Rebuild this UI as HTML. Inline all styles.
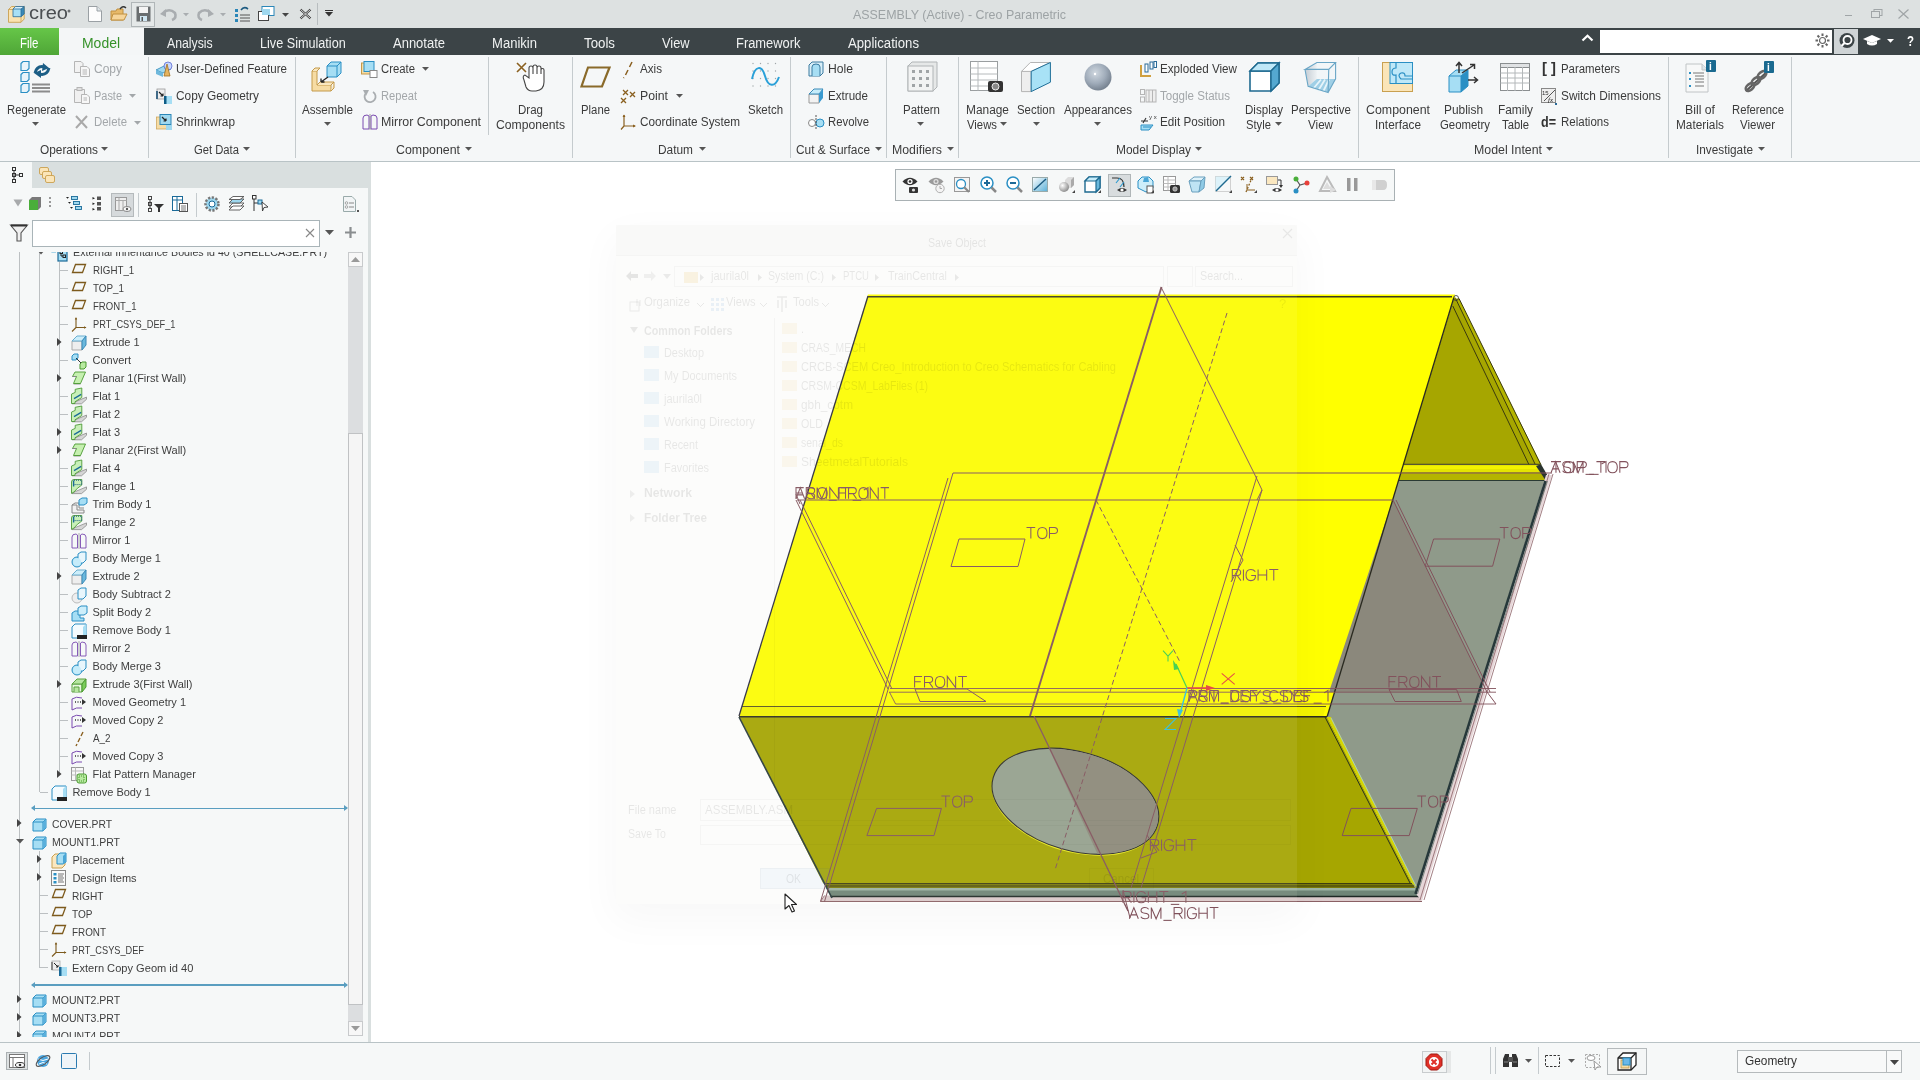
<!DOCTYPE html>
<html><head><meta charset="utf-8"><style>
html,body{margin:0;padding:0;width:1920px;height:1080px;overflow:hidden;position:relative;background:#fff;font-family:"Liberation Sans",sans-serif}
.t{position:absolute;white-space:nowrap;line-height:1;font-family:"Liberation Sans",sans-serif;transform-origin:0 0}
svg{overflow:visible}
</style></head><body><div style="position:absolute;left:0;top:0;width:1920px;height:1080px;overflow:hidden;will-change:transform">
<div style="position:absolute;left:0px;top:0px;width:1920px;height:28px;background:#dde1e1"></div>
<div style="position:absolute;left:0px;top:28px;width:1920px;height:27px;background:#3c4447"></div>
<div style="position:absolute;left:0px;top:28px;width:59px;height:27px;background:linear-gradient(180deg,#66c648,#4fa637)"></div>
<div style="position:absolute;left:59px;top:28px;width:85px;height:27px;background:#f4f6f7"></div>
<div style="position:absolute;left:0px;top:55px;width:1920px;height:106px;background:#f5f7f8"></div>
<div style="position:absolute;left:0px;top:161px;width:1920px;height:1px;background:#b9c3c6"></div>
<div style="position:absolute;left:0px;top:162px;width:371px;height:880px;background:#f6f8f8"></div>
<div style="position:absolute;left:32px;top:162px;width:336px;height:26px;background:#d9dfdf"></div>
<div style="position:absolute;left:368px;top:162px;width:3px;height:880px;background:#d9dfdf"></div>
<div style="position:absolute;left:371px;top:162px;width:1549px;height:880px;background:#ffffff"></div>
<div style="position:absolute;left:0px;top:1042px;width:1920px;height:1px;background:#b9c3c6"></div>
<div style="position:absolute;left:0px;top:1043px;width:1920px;height:37px;background:#f6f8f8"></div>
<svg style="position:absolute;left:8px;top:6px;" width="17" height="17" viewBox="0 0 17 17"><path d="M0.5 3.5L3.5 0.5H16.2V13L13 16.3H0.5Z" fill="#fbe3b0" stroke="#c9a050" stroke-width="0.9"></path><path d="M0.5 3.5H13V16.3M13 3.5L16.2 0.5" fill="none" stroke="#c9a050" stroke-width="0.8"></path><path d="M5 3H13V10.7H5Z" fill="#a8e0f6"></path><path d="M5 3L7.5 0.5H16.2L13 3Z" fill="#d4f0fc"></path><path d="M13 3L16.2 0.5V8L13 10.7Z" fill="#3a8ab8"></path><path d="M5 3H13V10.7H5ZM5 3L7.5 0.5H16.2V8L13 10.7M13 3L16.2 0.5" fill="none" stroke="#2a6a98" stroke-width="0.8"></path></svg>
<div class="t" style="left: 28.5px; top: 3.76px; font-size: 18px; color: rgb(75, 79, 82); transform: scaleX(1.1138);">creo</div>
<svg style="position:absolute;left:67px;top:9px;" width="4" height="4" viewBox="0 0 4 4"><circle cx="2" cy="2" r="1.5" fill="#6b6f72"></circle></svg>
<svg style="position:absolute;left:88px;top:6px;" width="14" height="16" viewBox="0 0 14 16"><path d="M0.5 0.5H9L13.5 5V15.5H0.5Z" fill="#fdfdfd" stroke="#9aa0a4"></path><path d="M9 0.5V5H13.5" fill="#dfe6ea" stroke="#9aa0a4"></path></svg>
<svg style="position:absolute;left:110px;top:5px;" width="18" height="17" viewBox="0 0 18 17"><path d="M1 6H6L7 4H13V15H1Z" fill="#e7b969" stroke="#c09040"></path><path d="M3 9H17L14 15H1Z" fill="#f6d59a" stroke="#c09040"></path><path d="M10 4 Q13 0 16 3" stroke="#333" fill="none" stroke-width="1.4"></path></svg>
<div style="position:absolute;left:131px;top:2px;width:24px;height:25px;background:#e4e8e8;border:1px solid #b0b6b8;box-sizing:border-box"></div>
<svg style="position:absolute;left:136px;top:6px;" width="15" height="16" viewBox="0 0 15 16"><path d="M0.5 0.5H14.5V15.5H0.5Z" fill="#6a6e70"></path><rect x="3" y="1" width="9" height="6" fill="#f4f4f4"></rect><rect x="4" y="10" width="7" height="5" fill="#cfe6f2"></rect><rect x="5.5" y="11" width="1.5" height="4" fill="#555"></rect></svg>
<svg style="position:absolute;left:160px;top:8px;" width="17" height="13" viewBox="0 0 17 13"><path d="M4 4 Q10 0 15 5 Q17 10 12 12" stroke="#a9adb0" stroke-width="2.6" fill="none"></path><path d="M0 6L6 1V9Z" fill="#a9adb0"></path></svg>
<svg style="position:absolute;left:183px;top:13px;" width="6" height="4.300000000000001" viewBox="0 0 6 4.300000000000001"><path d="M0 0H6L3.0 3.3000000000000003Z" fill="#a9adb0"></path></svg>
<svg style="position:absolute;left:197px;top:8px;" width="17" height="13" viewBox="0 0 17 13"><path d="M13 4 Q7 0 2 5 Q0 10 5 12" stroke="#a9adb0" stroke-width="2.6" fill="none"></path><path d="M17 6L11 1V9Z" fill="#a9adb0"></path></svg>
<svg style="position:absolute;left:220px;top:13px;" width="6" height="4.300000000000001" viewBox="0 0 6 4.300000000000001"><path d="M0 0H6L3.0 3.3000000000000003Z" fill="#a9adb0"></path></svg>
<svg style="position:absolute;left:235px;top:6px;" width="16" height="16" viewBox="0 0 16 16"><rect x="0" y="3" width="3" height="3" fill="#2a86b8"></rect><rect x="0" y="8" width="3" height="3" fill="#2a86b8"></rect><rect x="0" y="13" width="3" height="3" fill="#2a86b8"></rect><path d="M5 9H15M5 12H15M5 15H15" stroke="#555" stroke-width="1"></path><path d="M6 4 Q9 0 13 3" stroke="#1c5a80" stroke-width="1.6" fill="none"></path></svg>
<svg style="position:absolute;left:258px;top:6px;" width="17" height="16" viewBox="0 0 17 16"><rect x="4" y="0.5" width="12" height="9" fill="#fff" stroke="#2a86b8"></rect><rect x="0.5" y="5.5" width="10" height="9" fill="#fff" stroke="#444"></rect><rect x="4" y="3" width="8" height="6" fill="#9fd8ef"></rect></svg>
<svg style="position:absolute;left:282px;top:13px;" width="7" height="4.8500000000000005" viewBox="0 0 7 4.8500000000000005"><path d="M0 0H7L3.5 3.8500000000000005Z" fill="#444"></path></svg>
<svg style="position:absolute;left:299px;top:8px;" width="13" height="12" viewBox="0 0 13 12"><path d="M1.5 1.5L11.5 10.5M11.5 1.5L1.5 10.5" stroke="#333" stroke-width="2.2"></path><path d="M1.5 1.5L11.5 10.5M11.5 1.5L1.5 10.5" stroke="#fff" stroke-width="0.8"></path></svg>
<div style="position:absolute;left:317px;top:3px;width:1px;height:22px;background:#b8bdbf"></div>
<svg style="position:absolute;left:325px;top:12px;" width="8" height="5.4" viewBox="0 0 8 5.4"><path d="M0 0H8L4.0 4.4Z" fill="#333"></path></svg>
<div style="position:absolute;left:325px;top:10px;width:8px;height:1px;background:#333"></div>
<div class="t" style="left: 853px; top: 8px; font-size: 13px; color: rgb(157, 163, 165); transform: scaleX(0.9562);">ASSEMBLY (Active) - Creo Parametric</div>
<div style="position:absolute;left:1845px;top:15px;width:7px;height:1px;background:#a0a5a7"></div>
<svg style="position:absolute;left:1871px;top:9px;" width="12" height="9" viewBox="0 0 12 9"><rect x="3" y="0.5" width="8" height="6" fill="none" stroke="#a0a5a7"></rect><rect x="0.5" y="2.5" width="8" height="6" fill="#dde1e1" stroke="#a0a5a7"></rect></svg>
<svg style="position:absolute;left:1898px;top:9px;" width="11" height="10" viewBox="0 0 11 10"><path d="M0.5 0.5L10.5 9.5M10.5 0.5L0.5 9.5" stroke="#a0a5a7" stroke-width="1.2"></path></svg>
<div class="t" style="left: 20px; top: 35.65px; font-size: 14px; color: rgb(255, 255, 255); transform: scaleX(0.8199);">File</div>
<div class="t" style="left: 82px; top: 35.65px; font-size: 14px; color: rgb(54, 146, 42); transform: scaleX(0.9963);">Model</div>
<div class="t" style="left: 167px; top: 35.65px; font-size: 14px; color: rgb(240, 242, 242); transform: scaleX(0.8774);">Analysis</div>
<div class="t" style="left: 260px; top: 35.65px; font-size: 14px; color: rgb(240, 242, 242); transform: scaleX(0.9032);">Live Simulation</div>
<div class="t" style="left: 393px; top: 35.65px; font-size: 14px; color: rgb(240, 242, 242); transform: scaleX(0.9275);">Annotate</div>
<div class="t" style="left: 492px; top: 35.65px; font-size: 14px; color: rgb(240, 242, 242); transform: scaleX(0.9326);">Manikin</div>
<div class="t" style="left: 584px; top: 35.65px; font-size: 14px; color: rgb(240, 242, 242); transform: scaleX(0.9484);">Tools</div>
<div class="t" style="left: 662px; top: 35.65px; font-size: 14px; color: rgb(240, 242, 242); transform: scaleX(0.9138);">View</div>
<div class="t" style="left: 736px; top: 35.65px; font-size: 14px; color: rgb(240, 242, 242); transform: scaleX(0.9212);">Framework</div>
<div class="t" style="left: 848px; top: 35.65px; font-size: 14px; color: rgb(240, 242, 242); transform: scaleX(0.9404);">Applications</div>
<svg style="position:absolute;left:1582px;top:35px;" width="11" height="6" viewBox="0 0 11 6"><path d="M0.5 5.5L5.5 0.8L10.5 5.5" stroke="#fff" stroke-width="2.2" fill="none"></path></svg>
<div style="position:absolute;left:1600px;top:30px;width:232px;height:23px;background:#ffffff"></div>
<svg style="position:absolute;left:1814px;top:32px;" width="17" height="17" viewBox="0 0 17 17"><circle cx="8.5" cy="8.5" r="3" fill="none" stroke="#666" stroke-width="1.2"></circle><path d="M8.5 1.5V4M8.5 13V15.5M1.5 8.5H4M13 8.5H15.5M3.5 3.5L5.3 5.3M11.7 11.7L13.5 13.5M13.5 3.5L11.7 5.3M5.3 11.7L3.5 13.5" stroke="#666" stroke-width="2"></path></svg>
<div style="position:absolute;left:1834px;top:29px;width:24px;height:25px;background:#cfd4d6"></div>
<svg style="position:absolute;left:1837px;top:32px;" width="19" height="19" viewBox="0 0 19 19"><circle cx="10" cy="8.5" r="7.5" fill="#3c4447"></circle><circle cx="10.5" cy="8" r="4" fill="none" stroke="#fff" stroke-width="1.8"></circle><path d="M7.5 11L4.5 14" stroke="#fff" stroke-width="2.2"></path></svg>
<svg style="position:absolute;left:1863px;top:35px;" width="18" height="11" viewBox="0 0 18 11"><path d="M0 4L9 0L18 4L9 8Z" fill="#fff"></path><path d="M4 6V9Q9 12 14 9V6L9 8Z" fill="#fff"></path></svg>
<svg style="position:absolute;left:1887px;top:39px;" width="7" height="4.8500000000000005" viewBox="0 0 7 4.8500000000000005"><path d="M0 0H7L3.5 3.8500000000000005Z" fill="#fff"></path></svg>
<div class="t" style="left: 1907px; top: 34.15px; font-size: 14px; color: rgb(255, 255, 255); font-weight: bold; transform: scaleX(0.8175);">?</div>
<svg style="position:absolute;left:20px;top:60px;" width="32" height="32" viewBox="0 0 32 32">
      <g fill="#e8f4fa" stroke="#2a8fc4" stroke-width="1.2">
      <path d="M1 3.5L3 1.5H9V8.5L7 10.5H1Z"></path><path d="M1 14.5L3 12.5H9V19.5L7 21.5H1Z"></path><path d="M1 25.5L3 23.5H9V30.5L7 32.5H1Z"></path></g>
      <path d="M12 28H30M12 24.5H30M12 31.5H30" stroke="#8c8c8c" stroke-width="1.8"></path>
      <path d="M15 13 Q17 5 25 7" stroke="#1c5e86" stroke-width="3" fill="none"></path><path d="M23 3L29 8L22 11Z" fill="#1c5e86"></path>
      <path d="M29 8 Q27 16 19 14" stroke="#1c5e86" stroke-width="3" fill="none"></path><path d="M21 18L14 13L21 10Z" fill="#1c5e86"></path></svg>
<div class="t" style="left: 7px; top: 104.22px; font-size: 12.5px; color: rgb(59, 59, 59); transform: scaleX(0.9031);">Regenerate</div>
<svg style="position:absolute;left:32px;top:122px;" width="7" height="4.8500000000000005" viewBox="0 0 7 4.8500000000000005"><path d="M0 0H7L3.5 3.8500000000000005Z" fill="#555"></path></svg>
<svg style="position:absolute;left:74px;top:61px;" width="16" height="16" viewBox="0 0 16 16"><path d="M0.5 0.5H7L9 2.5V11.5H0.5Z" fill="#f2f2f2" stroke="#b5b5b5"></path><path d="M6.5 5.5H13L15.5 8V15.5H6.5Z" fill="#f7f7f7" stroke="#b5b5b5"></path><path d="M8.5 9H13M8.5 11H13M8.5 13H13" stroke="#b5b5b5"></path></svg>
<div class="t" style="left: 94px; top: 62.62px; font-size: 12.5px; color: rgb(163, 167, 170); transform: scaleX(0.9593);">Copy</div>
<svg style="position:absolute;left:74px;top:87px;" width="16" height="17" viewBox="0 0 16 17"><path d="M0.5 2.5H10.5V15.5H0.5Z" fill="#f0f0f0" stroke="#b5b5b5"></path><rect x="3" y="0.5" width="5" height="3" fill="#e0e0e0" stroke="#b5b5b5"></rect><path d="M7.5 7.5H13L15.5 10V16.5H7.5Z" fill="#f7f7f7" stroke="#b5b5b5"></path><path d="M9.5 11H13M9.5 13H13" stroke="#b5b5b5"></path></svg>
<div class="t" style="left: 94px; top: 90.22px; font-size: 12.5px; color: rgb(163, 167, 170); transform: scaleX(0.8759);">Paste</div>
<svg style="position:absolute;left:129px;top:94px;" width="7" height="4.8500000000000005" viewBox="0 0 7 4.8500000000000005"><path d="M0 0H7L3.5 3.8500000000000005Z" fill="#a3a7aa"></path></svg>
<svg style="position:absolute;left:75px;top:115px;" width="13" height="14" viewBox="0 0 13 14"><path d="M1 1L12 13M12 1L1 13" stroke="#a9a9a9" stroke-width="2"></path></svg>
<div class="t" style="left: 94px; top: 116.42px; font-size: 12.5px; color: rgb(163, 167, 170); transform: scaleX(0.9131);">Delete</div>
<svg style="position:absolute;left:134px;top:120.5px;" width="7" height="4.8500000000000005" viewBox="0 0 7 4.8500000000000005"><path d="M0 0H7L3.5 3.8500000000000005Z" fill="#a3a7aa"></path></svg>
<div class="t" style="left: 40px; top: 144.02px; font-size: 12.5px; color: rgb(59, 59, 59); transform: scaleX(0.9484);">Operations</div>
<svg style="position:absolute;left:101px;top:147px;" width="7" height="4.8500000000000005" viewBox="0 0 7 4.8500000000000005"><path d="M0 0H7L3.5 3.8500000000000005Z" fill="#555"></path></svg>
<div style="position:absolute;left:148px;top:57px;width:1px;height:101px;background:#c5cbce"></div>
<svg style="position:absolute;left:155px;top:61px;" width="18" height="17" viewBox="0 0 18 17"><path d="M1 9L9 5L16 8L8 12Z" fill="#9fd8ef" stroke="#2a86b8" stroke-width="0.8"></path><path d="M1 9V13L8 16V12Z" fill="#6fb8dc"></path><circle cx="13" cy="5" r="4" fill="#c8d8ff" stroke="#5a6ad0" stroke-width="0.8"></circle><path d="M9 15 L12 3 L15 15Z" fill="#e6b460" stroke="#a07020" stroke-width="0.8"></path></svg>
<div class="t" style="left: 176px; top: 62.62px; font-size: 12.5px; color: rgb(59, 59, 59); transform: scaleX(0.9234);">User-Defined Feature</div>
<svg style="position:absolute;left:156px;top:88px;" width="16" height="16" viewBox="0 0 16 16"><rect x="1" y="1" width="8" height="10" fill="#eee" stroke="#999" stroke-width="0.8"></rect><rect x="0" y="3" width="2" height="8" fill="#406a88"></rect><path d="M3 4L7 8M7 8V5.5M7 8H4.5" stroke="#222" stroke-width="1.1"></path><rect x="8" y="8" width="8" height="8" fill="#a6def4"></rect><rect x="8" y="8" width="2.5" height="8" fill="#0e5c86"></rect></svg>
<div class="t" style="left: 176px; top: 90.22px; font-size: 12.5px; color: rgb(59, 59, 59); transform: scaleX(0.9482);">Copy Geometry</div>
<svg style="position:absolute;left:156px;top:114px;" width="16" height="16" viewBox="0 0 16 16"><rect x="0.5" y="3" width="10" height="12" fill="#f6dca4" stroke="#d0a860" stroke-width="0.8"></rect><rect x="4" y="0.5" width="11" height="10" fill="#9fd8ef" stroke="#2a86b8"></rect><path d="M6 3L10 7M10 7V4.5M10 7H7.5" stroke="#222" stroke-width="1.2"></path><rect x="10" y="11" width="6" height="5" fill="#9fd8ef"></rect></svg>
<div class="t" style="left: 176px; top: 116.42px; font-size: 12.5px; color: rgb(59, 59, 59); transform: scaleX(0.9435);">Shrinkwrap</div>
<div class="t" style="left: 194px; top: 144.02px; font-size: 12.5px; color: rgb(59, 59, 59); transform: scaleX(0.8994);">Get Data</div>
<svg style="position:absolute;left:243px;top:147px;" width="7" height="4.8500000000000005" viewBox="0 0 7 4.8500000000000005"><path d="M0 0H7L3.5 3.8500000000000005Z" fill="#555"></path></svg>
<div style="position:absolute;left:295px;top:57px;width:1px;height:101px;background:#c5cbce"></div>
<svg style="position:absolute;left:310px;top:61px;" width="33" height="32" viewBox="0 0 33 32"><path d="M2 10H7V24H21V30H2Z" fill="#f6dca4" stroke="#c49a4a"></path><path d="M2 10L5 7H10L7 10M7 24L10 21H24L21 24M21 30L24 27V21" fill="#f9e7c0" stroke="#c49a4a"></path><path d="M17 5L21 1H31V12L27 16H17Z" fill="#a6def4" stroke="#2a8fc4"></path><path d="M17 5H27V16M27 5L31 1" fill="none" stroke="#2a8fc4"></path><path d="M18 16L11 21M11 21V17.5M11 21H14.5" stroke="#222" stroke-width="1.3"></path></svg>
<div class="t" style="left: 302px; top: 104.22px; font-size: 12.5px; color: rgb(59, 59, 59); transform: scaleX(0.9291);">Assemble</div>
<svg style="position:absolute;left:324px;top:122px;" width="7" height="4.8500000000000005" viewBox="0 0 7 4.8500000000000005"><path d="M0 0H7L3.5 3.8500000000000005Z" fill="#555"></path></svg>
<svg style="position:absolute;left:361px;top:61px;" width="17" height="17" viewBox="0 0 17 17"><rect x="0.5" y="2" width="10" height="11" fill="#f6dca4" stroke="#c49a4a"></rect><rect x="3" y="0.5" width="10" height="10" fill="#a6def4" stroke="#2a8fc4"></rect><rect x="9" y="9.5" width="7" height="7" fill="#fff" stroke="#888"></rect></svg>
<div class="t" style="left: 381px; top: 62.62px; font-size: 12.5px; color: rgb(59, 59, 59); transform: scaleX(0.9059);">Create</div>
<svg style="position:absolute;left:422px;top:66.5px;" width="7" height="4.8500000000000005" viewBox="0 0 7 4.8500000000000005"><path d="M0 0H7L3.5 3.8500000000000005Z" fill="#555"></path></svg>
<svg style="position:absolute;left:363px;top:89px;" width="14" height="14" viewBox="0 0 14 14"><path d="M10 3 A5.5 5.5 0 1 1 3 4" fill="none" stroke="#a9adb0" stroke-width="1.8"></path><path d="M0 1L6 1L3 7Z" fill="#a9adb0"></path></svg>
<div class="t" style="left: 381px; top: 90.22px; font-size: 12.5px; color: rgb(163, 167, 170); transform: scaleX(0.893);">Repeat</div>
<svg style="position:absolute;left:362px;top:114px;" width="16" height="16" viewBox="0 0 16 16"><path d="M1 15V4Q1 1 5 1L7 2V15Z" fill="none" stroke="#7a4ab0" stroke-width="1"></path><path d="M15 15V4Q15 1 11 1L9 2V15Z" fill="none" stroke="#7a4ab0" stroke-width="1"></path><path d="M8 0V16" stroke="#888" stroke-width="0.8"></path></svg>
<div class="t" style="left: 381px; top: 116.42px; font-size: 12.5px; color: rgb(59, 59, 59); transform: scaleX(0.9927);">Mirror Component</div>
<div class="t" style="left: 396px; top: 144.02px; font-size: 12.5px; color: rgb(59, 59, 59); transform: scaleX(0.9903);">Component</div>
<svg style="position:absolute;left:464.5px;top:147px;" width="7" height="4.8500000000000005" viewBox="0 0 7 4.8500000000000005"><path d="M0 0H7L3.5 3.8500000000000005Z" fill="#555"></path></svg>
<div style="position:absolute;left:488px;top:57px;width:1px;height:78px;background:#c5cbce"></div>
<svg style="position:absolute;left:516px;top:62px;" width="28" height="30" viewBox="0 0 28 30"><path d="M1 1L10 10M10 1L1 10" stroke="#8a6020" stroke-width="1.6"></path><path d="M8 18 Q6 14 9 13 L13 16 V6 Q13 4 15 4 Q17 4 17 6 V12 V5 Q17 3 19 3 Q21 3 21 5 V12 V6 Q21 4 23 4 Q25 4 25 6 V12 V8 Q25 6.5 26.5 6.5 Q28 6.5 28 8 V20 Q28 28 20 29 H16 Q12 29 10 25Z" fill="#fff" stroke="#444" stroke-width="1.1"></path></svg>
<div class="t" style="left: 518px; top: 104.22px; font-size: 12.5px; color: rgb(59, 59, 59); transform: scaleX(0.9227);">Drag</div>
<div class="t" style="left: 496px; top: 119.02px; font-size: 12.5px; color: rgb(59, 59, 59); transform: scaleX(0.9735);">Components</div>
<div style="position:absolute;left:572px;top:57px;width:1px;height:101px;background:#c5cbce"></div>
<svg style="position:absolute;left:580px;top:66px;" width="31" height="22" viewBox="0 0 31 22"><path d="M8 1.5H29.5L22 20.5H1.5Z" fill="none" stroke="#8a6a2a" stroke-width="2.2"></path></svg>
<div class="t" style="left: 581px; top: 104.22px; font-size: 12.5px; color: rgb(59, 59, 59); transform: scaleX(0.9067);">Plane</div>
<svg style="position:absolute;left:621px;top:61px;" width="12" height="17" viewBox="0 0 12 17"><path d="M11 1L8.5 6M7 9L4.5 14M3 16.5L2.5 17" stroke="#8a6020" stroke-width="1.5"></path></svg>
<div class="t" style="left: 640px; top: 62.62px; font-size: 12.5px; color: rgb(59, 59, 59); transform: scaleX(0.9312);">Axis</div>
<svg style="position:absolute;left:620px;top:89px;" width="16" height="15" viewBox="0 0 16 15"><path d="M3 1L8 6M8 1L3 6M10 3L15 8M15 3L10 8M1 9L6 14M6 9L1 14" stroke="#8a6020" stroke-width="1.3"></path></svg>
<div class="t" style="left: 640px; top: 90.22px; font-size: 12.5px; color: rgb(59, 59, 59); transform: scaleX(0.9825);">Point</div>
<svg style="position:absolute;left:675.5px;top:94px;" width="7" height="4.8500000000000005" viewBox="0 0 7 4.8500000000000005"><path d="M0 0H7L3.5 3.8500000000000005Z" fill="#555"></path></svg>
<svg style="position:absolute;left:620px;top:114px;" width="17" height="17" viewBox="0 0 17 17"><path d="M4 1V12L15 12M4 12L1 15.5" stroke="#8a6020" stroke-width="1.2" fill="none"></path><path d="M2.5 3L4 0.5L5.5 3ZM13 10.5L16 12L13 13.5Z" fill="#8a6020"></path></svg>
<div class="t" style="left: 640px; top: 116.42px; font-size: 12.5px; color: rgb(59, 59, 59); transform: scaleX(0.9406);">Coordinate System</div>
<svg style="position:absolute;left:751px;top:62px;" width="28" height="28" viewBox="0 0 28 28"><g fill="#a0a6aa"><circle cx="2" cy="1.5" r=".7"></circle><circle cx="2" cy="9" r=".7"></circle><circle cx="2" cy="16.5" r=".7"></circle><circle cx="2" cy="24" r=".7"></circle><circle cx="9.5" cy="1.5" r=".7"></circle><circle cx="9.5" cy="9" r=".7"></circle><circle cx="9.5" cy="16.5" r=".7"></circle><circle cx="9.5" cy="24" r=".7"></circle><circle cx="17" cy="1.5" r=".7"></circle><circle cx="17" cy="9" r=".7"></circle><circle cx="17" cy="16.5" r=".7"></circle><circle cx="17" cy="24" r=".7"></circle><circle cx="24.5" cy="1.5" r=".7"></circle><circle cx="24.5" cy="9" r=".7"></circle><circle cx="24.5" cy="16.5" r=".7"></circle><circle cx="24.5" cy="24" r=".7"></circle></g><path d="M1 17 C4 3 11 3 14 14 C17 25 24 26 28 15" fill="none" stroke="#2aa0d8" stroke-width="2"></path></svg>
<div class="t" style="left: 748px; top: 104.22px; font-size: 12.5px; color: rgb(59, 59, 59); transform: scaleX(0.9158);">Sketch</div>
<div class="t" style="left: 658px; top: 144.02px; font-size: 12.5px; color: rgb(59, 59, 59); transform: scaleX(0.9504);">Datum</div>
<svg style="position:absolute;left:698.5px;top:147px;" width="7" height="4.8500000000000005" viewBox="0 0 7 4.8500000000000005"><path d="M0 0H7L3.5 3.8500000000000005Z" fill="#555"></path></svg>
<div style="position:absolute;left:790px;top:57px;width:1px;height:101px;background:#c5cbce"></div>
<svg style="position:absolute;left:808px;top:61px;" width="16" height="16" viewBox="0 0 16 16"><path d="M1 4L4 1H15V12L12 15H1Z" fill="#d8eef8" stroke="#3a7aa0"></path><path d="M4 15V6Q4 3 8 3Q12 3 12 6V15" fill="#a6def4" stroke="#3a7aa0"></path></svg>
<div class="t" style="left: 828px; top: 62.62px; font-size: 12.5px; color: rgb(59, 59, 59); transform: scaleX(0.9721);">Hole</div>
<svg style="position:absolute;left:808px;top:88px;" width="16" height="16" viewBox="0 0 16 16"><path d="M1 6H11V15H1Z" fill="#f2f2f2" stroke="#999"></path><path d="M1 6L6 1H15L11 6Z" fill="#c6ecfa" stroke="#3a8ab8"></path><path d="M11 6L15 1V10L11 15Z" fill="#3a9ad0"></path></svg>
<div class="t" style="left: 828px; top: 90.22px; font-size: 12.5px; color: rgb(59, 59, 59); transform: scaleX(0.9282);">Extrude</div>
<svg style="position:absolute;left:808px;top:114px;" width="17" height="16" viewBox="0 0 17 16"><ellipse cx="4" cy="9" rx="3.5" ry="3.5" fill="#fff" stroke="#888"></ellipse><ellipse cx="12" cy="9" rx="4" ry="4" fill="#a6def4" stroke="#2a8fc4"></ellipse><path d="M8 1V16" stroke="#555" stroke-dasharray="2 1"></path></svg>
<div class="t" style="left: 828px; top: 116.42px; font-size: 12.5px; color: rgb(59, 59, 59); transform: scaleX(0.9076);">Revolve</div>
<div class="t" style="left: 796px; top: 144.02px; font-size: 12.5px; color: rgb(59, 59, 59); transform: scaleX(0.9508);">Cut &amp; Surface</div>
<svg style="position:absolute;left:874.5px;top:147px;" width="7" height="4.8500000000000005" viewBox="0 0 7 4.8500000000000005"><path d="M0 0H7L3.5 3.8500000000000005Z" fill="#555"></path></svg>
<div style="position:absolute;left:886px;top:57px;width:1px;height:101px;background:#c5cbce"></div>
<svg style="position:absolute;left:907px;top:61px;" width="31" height="31" viewBox="0 0 31 31"><path d="M1 5L5 1H30V26L26 30H1Z" fill="#e6e8e8" stroke="#b0b4b6"></path><rect x="1" y="5" width="25" height="25" fill="#f2f3f3" stroke="#b0b4b6"></rect><g fill="#a0a4a6"><rect x="5" y="9" width="3" height="3"></rect><rect x="12" y="9" width="3" height="3"></rect><rect x="19" y="9" width="3" height="3"></rect><rect x="5" y="16" width="3" height="3"></rect><rect x="12" y="16" width="3" height="3"></rect><rect x="19" y="16" width="3" height="3"></rect><rect x="5" y="23" width="3" height="3"></rect><rect x="12" y="23" width="3" height="3"></rect><rect x="19" y="23" width="3" height="3"></rect></g></svg>
<div class="t" style="left: 903px; top: 104.22px; font-size: 12.5px; color: rgb(59, 59, 59); transform: scaleX(0.9178);">Pattern</div>
<svg style="position:absolute;left:917px;top:122px;" width="7" height="4.8500000000000005" viewBox="0 0 7 4.8500000000000005"><path d="M0 0H7L3.5 3.8500000000000005Z" fill="#555"></path></svg>
<div class="t" style="left: 892px; top: 144.02px; font-size: 12.5px; color: rgb(59, 59, 59); transform: scaleX(0.9858);">Modifiers</div>
<svg style="position:absolute;left:946.5px;top:147px;" width="7" height="4.8500000000000005" viewBox="0 0 7 4.8500000000000005"><path d="M0 0H7L3.5 3.8500000000000005Z" fill="#555"></path></svg>
<div style="position:absolute;left:958px;top:57px;width:1px;height:101px;background:#c5cbce"></div>
<svg style="position:absolute;left:970px;top:61px;" width="34" height="32" viewBox="0 0 34 32"><rect x="0.5" y="0.5" width="27" height="29" fill="#fff" stroke="#9a9ea0"></rect><path d="M0.5 7H27.5M0.5 13H27.5M0.5 19H27.5M0.5 25H27.5M8 0.5V29.5" stroke="#b6babc"></path><rect x="18" y="20" width="15" height="11" rx="2" fill="#333"></rect><circle cx="25.5" cy="25.5" r="3.5" fill="#888" stroke="#eee"></circle></svg>
<div class="t" style="left: 966px; top: 104.22px; font-size: 12.5px; color: rgb(59, 59, 59); transform: scaleX(0.9516);">Manage</div>
<div class="t" style="left: 967px; top: 119.02px; font-size: 12.5px; color: rgb(59, 59, 59); transform: scaleX(0.9057);">Views</div>
<svg style="position:absolute;left:1000px;top:122px;" width="7" height="4.8500000000000005" viewBox="0 0 7 4.8500000000000005"><path d="M0 0H7L3.5 3.8500000000000005Z" fill="#555"></path></svg>
<svg style="position:absolute;left:1021px;top:62px;" width="31" height="31" viewBox="0 0 31 31"><path d="M0.5 9.4H10.2V29.6H0.5Z" fill="#eeeeee" stroke="#b4b4b4"></path><path d="M0.5 9.4L9.3 0.5H29.4L10.2 9.4Z" fill="#ffffff" stroke="#b4b4b4"></path><path d="M10.2 9.4L29.4 0.5V20.2L10.2 29.6Z" fill="#a8e2f6" stroke="#1e6e98"></path></svg>
<div class="t" style="left: 1017px; top: 104.22px; font-size: 12.5px; color: rgb(59, 59, 59); transform: scaleX(0.9112);">Section</div>
<svg style="position:absolute;left:1033px;top:122px;" width="7" height="4.8500000000000005" viewBox="0 0 7 4.8500000000000005"><path d="M0 0H7L3.5 3.8500000000000005Z" fill="#555"></path></svg>
<svg style="position:absolute;left:1084px;top:63px;" width="29" height="29" viewBox="0 0 29 29"><defs><radialGradient id="sph" cx="0.4" cy="0.35" r="0.7"><stop offset="0" stop-color="#d0d8e0"></stop><stop offset="0.55" stop-color="#a0acba"></stop><stop offset="1" stop-color="#707c8a"></stop></radialGradient></defs><circle cx="14" cy="14" r="13.5" fill="url(#sph)"></circle><circle cx="11" cy="11" r="1.2" fill="#fff"></circle></svg>
<div class="t" style="left: 1064px; top: 104.22px; font-size: 12.5px; color: rgb(59, 59, 59); transform: scaleX(0.923);">Appearances</div>
<svg style="position:absolute;left:1094px;top:122px;" width="7" height="4.8500000000000005" viewBox="0 0 7 4.8500000000000005"><path d="M0 0H7L3.5 3.8500000000000005Z" fill="#555"></path></svg>
<svg style="position:absolute;left:1140px;top:61px;" width="17" height="16" viewBox="0 0 17 16"><path d="M1 4V15H11" fill="none" stroke="#d0a040" stroke-width="2"></path><rect x="5" y="3" width="3" height="8" fill="#fff" stroke="#2a6a98"></rect><rect x="10" y="1" width="3" height="7" fill="#fff" stroke="#2a6a98"></rect><rect x="14" y="0.5" width="2.5" height="6" fill="#fff" stroke="#2a6a98"></rect></svg>
<div class="t" style="left: 1160px; top: 62.62px; font-size: 12.5px; color: rgb(59, 59, 59); transform: scaleX(0.9337);">Exploded View</div>
<svg style="position:absolute;left:1140px;top:89px;" width="16" height="14" viewBox="0 0 16 14"><rect x="0.5" y="0.5" width="4" height="5" fill="none" stroke="#b5b5b5"></rect><rect x="0.5" y="8" width="4" height="5" fill="none" stroke="#b5b5b5"></rect><rect x="6" y="1" width="10" height="12" fill="#eee" stroke="#b5b5b5"></rect><path d="M9 1V13M12.5 1V13" stroke="#b5b5b5"></path></svg>
<div class="t" style="left: 1160px; top: 90.22px; font-size: 12.5px; color: rgb(163, 167, 170); transform: scaleX(0.9241);">Toggle Status</div>
<svg style="position:absolute;left:1140px;top:113px;" width="17" height="18" viewBox="0 0 17 18"><path d="M1 8H8M3 10L6 5" stroke="#333" stroke-width="1.1"></path><text x="9" y="6" font-size="6" fill="#333" font-family="Liberation Sans">y x</text><path d="M1 12H13L9 17H1Z" fill="#a6def4" stroke="#2a8fc4"></path><path d="M3 14H11" stroke="#2a8fc4"></path></svg>
<div class="t" style="left: 1160px; top: 116.42px; font-size: 12.5px; color: rgb(59, 59, 59); transform: scaleX(0.9355);">Edit Position</div>
<svg style="position:absolute;left:1249px;top:62px;" width="31" height="30" viewBox="0 0 31 30"><path d="M1 9L9 1H30V21L22 29H1Z" fill="#fff" stroke="#1e6a90" stroke-width="1.6"></path><path d="M1 9H22V29" fill="none" stroke="#1e6a90" stroke-width="1.6"></path><path d="M9 1L30 1L22 9H1Z" fill="#bfe8f8" stroke="#1e6a90" stroke-width="1.4"></path><path d="M22 9L30 1V21L22 29Z" fill="#54a8d0" stroke="#1e6a90" stroke-width="1.4"></path></svg>
<div class="t" style="left: 1245px; top: 104.22px; font-size: 12.5px; color: rgb(59, 59, 59); transform: scaleX(0.9268);">Display</div>
<div class="t" style="left: 1246px; top: 119.02px; font-size: 12.5px; color: rgb(59, 59, 59); transform: scaleX(0.8994);">Style</div>
<svg style="position:absolute;left:1274.5px;top:122px;" width="7" height="4.8500000000000005" viewBox="0 0 7 4.8500000000000005"><path d="M0 0H7L3.5 3.8500000000000005Z" fill="#555"></path></svg>
<svg style="position:absolute;left:1305px;top:62px;" width="32" height="32" viewBox="0 0 32 32"><defs><linearGradient id="pw" x1="0" y1="0" x2="1" y2="0"><stop offset="0" stop-color="#c4ccd4"></stop><stop offset="1" stop-color="#eef2f4"></stop></linearGradient></defs><path d="M0 7.4L11.9 0.5V17L3.1 24.25Z" fill="url(#pw)"></path><path d="M11.9 0.5H30.6V16.75H11.9Z" fill="#f2f6f8"></path><path d="M3.1 24.25L11.9 17H30.6L23.1 30.5Z" fill="#9fcfe6"></path><path d="M8 27L16 17.5M13 29L20 17.5M18 30L24 17.5" stroke="#e6f4fa" stroke-width="1.8"></path><path d="M0 7.4L11.9 0.5H30.6L23.75 7.4Z M0 7.4L3.1 24.25L23.1 30.5L23.75 7.4 M23.1 30.5L30.6 16.75V0.5" fill="none" stroke="#6aa6c6" stroke-width="1.1"></path></svg>
<div class="t" style="left: 1291px; top: 104.22px; font-size: 12.5px; color: rgb(59, 59, 59); transform: scaleX(0.9187);">Perspective</div>
<div class="t" style="left: 1308px; top: 119.02px; font-size: 12.5px; color: rgb(59, 59, 59); transform: scaleX(0.9302);">View</div>
<div class="t" style="left: 1116px; top: 144.02px; font-size: 12.5px; color: rgb(59, 59, 59); transform: scaleX(0.9552);">Model Display</div>
<svg style="position:absolute;left:1195px;top:147px;" width="7" height="4.8500000000000005" viewBox="0 0 7 4.8500000000000005"><path d="M0 0H7L3.5 3.8500000000000005Z" fill="#555"></path></svg>
<div style="position:absolute;left:1358px;top:57px;width:1px;height:101px;background:#c5cbce"></div>
<svg style="position:absolute;left:1382px;top:62px;" width="31" height="30" viewBox="0 0 31 30"><rect x="0.5" y="0.5" width="30" height="29" fill="#fbe5b8" stroke="#c9a050"></rect><rect x="8" y="0.5" width="22.5" height="21" fill="#bfe8f8" stroke="#2a8fc4"></rect><path d="M14 0.5V6Q10 6 10 10Q10 14 14 13V21M30.5 14H23Q23 10 19 11Q15 13 19 17H30.5" fill="none" stroke="#2a8fc4" stroke-width="1.2"></path></svg>
<div class="t" style="left: 1366px; top: 104.22px; font-size: 12.5px; color: rgb(59, 59, 59); transform: scaleX(0.9903);">Component</div>
<div class="t" style="left: 1375px; top: 119.02px; font-size: 12.5px; color: rgb(59, 59, 59); transform: scaleX(0.9457);">Interface</div>
<svg style="position:absolute;left:1448px;top:62px;" width="31" height="31" viewBox="0 0 31 31"><path d="M1 14L8 8H20V24L13 30H1Z" fill="#a6def4" stroke="#2a8fc4"></path><path d="M13 14V30M1 14H13L20 8" fill="none" stroke="#2a8fc4"></path><path d="M13 14L20 8V24L13 30Z" fill="#2a8fc4"></path><path d="M11 11V1M8 4L11 0.5L14 4" stroke="#333" stroke-width="1.5" fill="none"></path><path d="M14 11L26 3M22 2.5H26.5V7" stroke="#333" stroke-width="1.5" fill="none"></path><path d="M20 18H29M26 15L29.5 18L26 21" stroke="#333" stroke-width="1.5" fill="none"></path></svg>
<div class="t" style="left: 1444px; top: 104.22px; font-size: 12.5px; color: rgb(59, 59, 59); transform: scaleX(0.9512);">Publish</div>
<div class="t" style="left: 1440px; top: 119.02px; font-size: 12.5px; color: rgb(59, 59, 59); transform: scaleX(0.9109);">Geometry</div>
<svg style="position:absolute;left:1500px;top:63px;" width="31" height="29" viewBox="0 0 31 29"><rect x="0.5" y="0.5" width="29" height="27" fill="#fff" stroke="#8a8e90"></rect><rect x="0.5" y="0.5" width="29" height="4" fill="#e0e2e4" stroke="#8a8e90"></rect><path d="M0.5 10H29.5M0.5 15H29.5M0.5 20H29.5M7.5 4V28M15 4V28M22.5 4V28" stroke="#b4b8ba"></path></svg>
<div class="t" style="left: 1498px; top: 104.22px; font-size: 12.5px; color: rgb(59, 59, 59); transform: scaleX(0.9508);">Family</div>
<div class="t" style="left: 1502px; top: 119.02px; font-size: 12.5px; color: rgb(59, 59, 59); transform: scaleX(0.9033);">Table</div>
<div class="t" style="left: 1542px; top: 61.35px; font-size: 14px; color: rgb(51, 51, 51); font-weight: bold; transform: scaleX(1.0591);">[ ]</div>
<div class="t" style="left: 1561px; top: 62.62px; font-size: 12.5px; color: rgb(59, 59, 59); transform: scaleX(0.9132);">Parameters</div>
<svg style="position:absolute;left:1541px;top:88px;" width="16" height="17" viewBox="0 0 16 17"><rect x="0.5" y="0.5" width="14" height="14" fill="#eee" stroke="#888"></rect><text x="1" y="7" font-size="6" fill="#333" font-family="Liberation Sans">15</text><path d="M3 13L14 2" stroke="#555"></path><text x="7" y="14" font-size="7" fill="#222" font-style="italic" font-family="Liberation Serif">fx</text><rect x="14" y="15" width="2" height="2" fill="#2a6a98"></rect></svg>
<div class="t" style="left: 1561px; top: 90.22px; font-size: 12.5px; color: rgb(59, 59, 59); transform: scaleX(0.947);">Switch Dimensions</div>
<div class="t" style="left: 1541px; top: 115.15px; font-size: 14px; color: rgb(51, 51, 51); font-weight: bold; transform: scaleX(0.8964);">d=</div>
<div class="t" style="left: 1561px; top: 116.42px; font-size: 12.5px; color: rgb(59, 59, 59); transform: scaleX(0.9209);">Relations</div>
<div class="t" style="left: 1474px; top: 144.02px; font-size: 12.5px; color: rgb(59, 59, 59); transform: scaleX(0.9884);">Model Intent</div>
<svg style="position:absolute;left:1546px;top:147px;" width="7" height="4.8500000000000005" viewBox="0 0 7 4.8500000000000005"><path d="M0 0H7L3.5 3.8500000000000005Z" fill="#555"></path></svg>
<div style="position:absolute;left:1668px;top:57px;width:1px;height:101px;background:#c5cbce"></div>
<svg style="position:absolute;left:1685px;top:60px;" width="32" height="33" viewBox="0 0 32 33"><path d="M1 4H17L23 10V32H1Z" fill="#f7f8f8" stroke="#c0c4c6"></path><path d="M17 4V10H23" fill="#dde6ea" stroke="#c0c4c6"></path><g fill="#2a8fc4"><rect x="4" y="12" width="2" height="2"></rect><rect x="4" y="18" width="2" height="2"></rect><rect x="4" y="25" width="2" height="2"></rect></g><path d="M8 13H19M10 16H19M10 19H19M10 22H19M10 26H19" stroke="#777"></path><rect x="21" y="0" width="10" height="12" rx="1" fill="#1a6a90"></rect><text x="24" y="10" font-size="10" font-weight="bold" fill="#fff" font-family="Liberation Sans">i</text></svg>
<div class="t" style="left: 1685px; top: 104.22px; font-size: 12.5px; color: rgb(59, 59, 59); transform: scaleX(0.9811);">Bill of</div>
<div class="t" style="left: 1676px; top: 119.02px; font-size: 12.5px; color: rgb(59, 59, 59); transform: scaleX(0.9464);">Materials</div>
<svg style="position:absolute;left:1743px;top:60px;" width="31" height="33" viewBox="0 0 31 33"><path d="M4 30 L26 10" stroke="#555" stroke-width="2"></path><g fill="none" stroke="#666" stroke-width="2.6"><ellipse cx="7" cy="27" rx="5" ry="3" transform="rotate(-40 7 27)"></ellipse><ellipse cx="13" cy="21" rx="5" ry="3" transform="rotate(-40 13 21)"></ellipse><ellipse cx="19" cy="15" rx="5" ry="3" transform="rotate(-40 19 15)"></ellipse></g><rect x="21" y="1" width="10" height="12" rx="1" fill="#1a6a90"></rect><text x="24" y="11" font-size="10" font-weight="bold" fill="#fff" font-family="Liberation Sans">i</text></svg>
<div class="t" style="left: 1732px; top: 104.22px; font-size: 12.5px; color: rgb(59, 59, 59); transform: scaleX(0.9014);">Reference</div>
<div class="t" style="left: 1740px; top: 119.02px; font-size: 12.5px; color: rgb(59, 59, 59); transform: scaleX(0.9214);">Viewer</div>
<div class="t" style="left: 1696px; top: 144.02px; font-size: 12.5px; color: rgb(59, 59, 59); transform: scaleX(0.9426);">Investigate</div>
<svg style="position:absolute;left:1757.5px;top:147px;" width="7" height="4.8500000000000005" viewBox="0 0 7 4.8500000000000005"><path d="M0 0H7L3.5 3.8500000000000005Z" fill="#555"></path></svg>
<div style="position:absolute;left:1791px;top:57px;width:1px;height:101px;background:#c5cbce"></div>
<svg style="position:absolute;left:12px;top:167px;" width="12" height="17" viewBox="0 0 12 17"><g fill="none" stroke="#333" stroke-width="1"><rect x="0.5" y="0.5" width="3" height="3"></rect><rect x="0.5" y="6.5" width="3" height="3"></rect><rect x="0.5" y="12.5" width="3" height="3"></rect><rect x="7.5" y="6.5" width="3" height="3"></rect></g><path d="M2 3.5V12.5M3.5 8H7.5" stroke="#333"></path></svg>
<svg style="position:absolute;left:39px;top:167px;" width="17" height="17" viewBox="0 0 17 17"><g fill="#fbe5b8" stroke="#c9a050" stroke-width="0.9"><rect x="0.5" y="0.5" width="9" height="7" rx="1.5"></rect><rect x="3.5" y="4.5" width="9" height="7" rx="1.5"></rect><rect x="6.5" y="8.5" width="9" height="7" rx="1.5"></rect></g></svg>
<svg style="position:absolute;left:13px;top:199px;" width="10" height="8" viewBox="0 0 10 8"><path d="M0.5 0.5H9.5L5 7.5Z" fill="#a8aaac"></path></svg>
<svg style="position:absolute;left:28px;top:195px;" width="14" height="16" viewBox="0 0 14 16"><path d="M1 5L4 2H13V12L10 15H1Z" fill="#7a7a7a"></path><rect x="1" y="5" width="9" height="10" fill="#4aae3a"></rect></svg>
<svg style="position:absolute;left:49px;top:197px;" width="3" height="12" viewBox="0 0 3 12"><g fill="#999"><rect x="0" y="0" width="2" height="2"></rect><rect x="0" y="4" width="2" height="2"></rect><rect x="0" y="8" width="2" height="2"></rect></g></svg>
<svg style="position:absolute;left:66px;top:196px;" width="16" height="15" viewBox="0 0 16 15"><g fill="#9fd8ef" stroke="#1a6a98" stroke-width="0.9"><rect x="5.5" y="0.5" width="6" height="3"></rect><rect x="7.5" y="5.5" width="6" height="3"></rect><rect x="9.5" y="10.5" width="6" height="3"></rect></g><path d="M0 1H3L1.5 2.8ZM2 6H5L3.5 7.8ZM4 11H7L5.5 12.8Z" fill="#222"></path></svg>
<svg style="position:absolute;left:92px;top:196px;" width="10" height="15" viewBox="0 0 10 15"><g fill="#555"><rect x="5" y="0.5" width="4" height="3.5"></rect><rect x="5" y="6" width="4" height="3.5"></rect><rect x="5" y="11" width="4" height="3.5"></rect></g><path d="M0.5 1L3 2.3L0.5 3.5ZM0.5 6.5L3 7.8L0.5 9ZM0.5 12L3 13.3L0.5 14.5Z" fill="#222"></path></svg>
<div style="position:absolute;left:111px;top:193px;width:23px;height:24px;background:#d6dadc;border:1px solid #b5babc;box-sizing:border-box"></div>
<svg style="position:absolute;left:115px;top:197px;" width="16" height="16" viewBox="0 0 16 16"><rect x="0.5" y="0.5" width="11" height="13" fill="#eee" stroke="#999"></rect><path d="M0.5 3.5H11.5M4 0.5V13.5M8 3.5V13.5" stroke="#aaa"></path><ellipse cx="12" cy="12" rx="4" ry="2.5" fill="#fff" stroke="#888"></ellipse><circle cx="12" cy="12" r="1.2" fill="#555"></circle></svg>
<div style="position:absolute;left:138px;top:193px;width:1px;height:24px;background:#c5cbce"></div>
<svg style="position:absolute;left:148px;top:196px;" width="17" height="16" viewBox="0 0 17 16"><g fill="none" stroke="#333" stroke-width="0.9"><rect x="0.5" y="0.5" width="3" height="3"></rect><rect x="0.5" y="6.5" width="3" height="3"></rect><rect x="0.5" y="12.5" width="3" height="3"></rect></g><path d="M2 3.5V12.5" stroke="#333"></path><path d="M6 8H16L12 12V16H10V12Z" fill="#333"></path></svg>
<svg style="position:absolute;left:172px;top:196px;" width="16" height="16" viewBox="0 0 16 16"><rect x="0.5" y="0.5" width="10" height="14" fill="#fff" stroke="#1a6a98"></rect><path d="M0.5 4H10.5M5 0.5V14.5" stroke="#1a6a98"></path><rect x="7.5" y="7.5" width="8" height="8" fill="#fff" stroke="#555"></rect><path d="M9 10H14M9 12H14M9 14H14" stroke="#555" stroke-width="0.8"></path></svg>
<div style="position:absolute;left:196px;top:193px;width:1px;height:24px;background:#c5cbce"></div>
<svg style="position:absolute;left:204px;top:196px;" width="16" height="16" viewBox="0 0 16 16"><circle cx="8" cy="8" r="6.5" fill="#9fd8ef" stroke="#777" stroke-width="2.5" stroke-dasharray="2.2 1.5"></circle><circle cx="8" cy="8" r="3" fill="#fff" stroke="#1a6a98"></circle></svg>
<svg style="position:absolute;left:228px;top:196px;" width="17" height="15" viewBox="0 0 17 15"><g fill="#fff" stroke="#555" stroke-width="0.9"><path d="M1 11L5 7H16L12 11Z"></path><path d="M1 7L5 3H16L12 7Z" fill="#9fd8ef"></path><path d="M1 3.5L5 0.5H16L12 3.5Z"></path></g><path d="M1 14L5 10H16L12 14Z" fill="#fff" stroke="#555" stroke-width="0.9"></path></svg>
<svg style="position:absolute;left:252px;top:195px;" width="17" height="17" viewBox="0 0 17 17"><rect x="0.5" y="0.5" width="3.5" height="3.5" fill="#fff" stroke="#333"></rect><path d="M2 4V16M2 8H7" stroke="#333"></path><rect x="6" y="5" width="4" height="4" fill="#9fd8ef" stroke="#1a6a98"></rect><path d="M10 7L16 12L12 12.5L10.5 16Z" fill="#fff" stroke="#333" stroke-width="0.9"></path></svg>
<svg style="position:absolute;left:343px;top:196px;" width="16" height="17" viewBox="0 0 16 17"><path d="M0.5 0.5H9L12.5 4V15.5H0.5Z" fill="#f2f5f6" stroke="#9aa"></path><circle cx="3.5" cy="7" r="1.3" fill="none" stroke="#888" stroke-width=".7"></circle><circle cx="3.5" cy="11" r="1.3" fill="none" stroke="#888" stroke-width=".7"></circle><path d="M6 7H11M6 11H11" stroke="#888"></path><path d="M14 14L16 14L16 16L14 16Z" fill="#555"></path></svg>
<svg style="position:absolute;left:10px;top:224px;" width="19" height="19" viewBox="0 0 19 19"><path d="M0.5 1H17.5L11 9V17H7V9Z" fill="#f0f0f0" stroke="#555" stroke-width="1.1"></path><path d="M1 1.5H17" stroke="#333" stroke-width="2"></path></svg>
<div style="position:absolute;left:32px;top:220px;width:288px;height:27px;background:#ffffff;border:1px solid #a9b4b8;box-sizing:border-box"></div>
<svg style="position:absolute;left:305px;top:228px;" width="10" height="10" viewBox="0 0 10 10"><path d="M1 1L9 9M9 1L1 9" stroke="#888" stroke-width="1.1"></path></svg>
<svg style="position:absolute;left:325px;top:230px;" width="9" height="6" viewBox="0 0 9 6"><path d="M0 0H9L4.5 5Z" fill="#555"></path></svg>
<svg style="position:absolute;left:345px;top:227px;" width="11" height="11" viewBox="0 0 11 11"><path d="M5.5 0V11M0 5.5H11" stroke="#8a8e90" stroke-width="2.2"></path></svg>
<div style="position:absolute;left:0;top:252px;width:348px;height:785px;overflow:hidden">
<div style="position:absolute;left:0;top:0;width:348px;height:789px">
<div style="position:absolute;left:19px;top:0px;width:1px;height:789px;background:#bcc0c2"></div>
<div style="position:absolute;left:39px;top:0px;width:1px;height:540px;background:#bcc0c2"></div>
<div style="position:absolute;left:59px;top:10px;width:1px;height:513px;background:#bcc0c2"></div>
<div style="position:absolute;left:60px;top:18.0px;width:8px;height:1px;background:#bcc0c2"></div>
<div style="position:absolute;left:60px;top:36.0px;width:8px;height:1px;background:#bcc0c2"></div>
<div style="position:absolute;left:60px;top:54.0px;width:8px;height:1px;background:#bcc0c2"></div>
<div style="position:absolute;left:60px;top:72.0px;width:8px;height:1px;background:#bcc0c2"></div>
<div style="position:absolute;left:60px;top:108.0px;width:8px;height:1px;background:#bcc0c2"></div>
<div style="position:absolute;left:60px;top:144.0px;width:8px;height:1px;background:#bcc0c2"></div>
<div style="position:absolute;left:60px;top:162.0px;width:8px;height:1px;background:#bcc0c2"></div>
<div style="position:absolute;left:60px;top:216.0px;width:8px;height:1px;background:#bcc0c2"></div>
<div style="position:absolute;left:60px;top:234.0px;width:8px;height:1px;background:#bcc0c2"></div>
<div style="position:absolute;left:60px;top:252.0px;width:8px;height:1px;background:#bcc0c2"></div>
<div style="position:absolute;left:60px;top:270.0px;width:8px;height:1px;background:#bcc0c2"></div>
<div style="position:absolute;left:60px;top:288.0px;width:8px;height:1px;background:#bcc0c2"></div>
<div style="position:absolute;left:60px;top:306.0px;width:8px;height:1px;background:#bcc0c2"></div>
<div style="position:absolute;left:60px;top:342.0px;width:8px;height:1px;background:#bcc0c2"></div>
<div style="position:absolute;left:60px;top:360.0px;width:8px;height:1px;background:#bcc0c2"></div>
<div style="position:absolute;left:60px;top:378.0px;width:8px;height:1px;background:#bcc0c2"></div>
<div style="position:absolute;left:60px;top:396.0px;width:8px;height:1px;background:#bcc0c2"></div>
<div style="position:absolute;left:60px;top:414.0px;width:8px;height:1px;background:#bcc0c2"></div>
<div style="position:absolute;left:60px;top:450.0px;width:8px;height:1px;background:#bcc0c2"></div>
<div style="position:absolute;left:60px;top:468.0px;width:8px;height:1px;background:#bcc0c2"></div>
<div style="position:absolute;left:60px;top:486.0px;width:8px;height:1px;background:#bcc0c2"></div>
<div style="position:absolute;left:60px;top:504.0px;width:8px;height:1px;background:#bcc0c2"></div>
<svg style="position:absolute;left:37px;top:-2.5px;" width="8" height="5" viewBox="0 0 8 5"><path d="M0 0H8L4 4.5Z" fill="#555"></path></svg>
<svg style="position:absolute;left:51px;top:-6.0px;" width="16" height="16" viewBox="0 0 16 16"><path d="M1 3V6H5" fill="none" stroke="#5ab0d8" stroke-width="1.2"></path><rect x="7" y="1" width="9" height="14" fill="#a6def4" stroke="#1a6a98" stroke-width="1.2"></rect><rect x="9" y="5" width="2.5" height="2.5" fill="none" stroke="#222"></rect><rect x="12" y="9" width="2.5" height="2.5" fill="none" stroke="#222"></rect><path d="M10 8V10H12" stroke="#222" fill="none"></path></svg>
<div class="t" style="left: 72.5px; top: -4.56px; font-size: 11px; color: rgb(62, 62, 62); transform: scaleX(0.9714);">External Inheritance Bodies id 40 (SHELLCASE.PRT)</div>
<svg style="position:absolute;left:71px;top:11.0px;" width="16" height="16" viewBox="0 0 16 16"><path d="M4.5 1.5H14.5L11.5 9.5H1.5Z" fill="none" stroke="#7d5a1c" stroke-width="1.3"></path></svg>
<div class="t" style="left: 92.5px; top: 13.44px; font-size: 11px; color: rgb(62, 62, 62); transform: scaleX(0.8888);">RIGHT_1</div>
<svg style="position:absolute;left:71px;top:29.0px;" width="16" height="16" viewBox="0 0 16 16"><path d="M4.5 1.5H14.5L11.5 9.5H1.5Z" fill="none" stroke="#7d5a1c" stroke-width="1.3"></path></svg>
<div class="t" style="left: 92.5px; top: 31.44px; font-size: 11px; color: rgb(62, 62, 62); transform: scaleX(0.8945);">TOP_1</div>
<svg style="position:absolute;left:71px;top:47.0px;" width="16" height="16" viewBox="0 0 16 16"><path d="M4.5 1.5H14.5L11.5 9.5H1.5Z" fill="none" stroke="#7d5a1c" stroke-width="1.3"></path></svg>
<div class="t" style="left: 92.5px; top: 49.44px; font-size: 11px; color: rgb(62, 62, 62); transform: scaleX(0.8678);">FRONT_1</div>
<svg style="position:absolute;left:71px;top:65.0px;" width="16" height="16" viewBox="0 0 16 16"><path d="M5 1V10.5L15 10.5M5 10.5L1 14.5" stroke="#7d5a1c" stroke-width="1.1" fill="none"></path><path d="M3.8 2.5L5 0L6.2 2.5ZM13 9.3L15.5 10.5L13 11.7Z" fill="#7d5a1c"></path></svg>
<div class="t" style="left: 92.5px; top: 67.44px; font-size: 11px; color: rgb(62, 62, 62); transform: scaleX(0.8398);">PRT_CSYS_DEF_1</div>
<svg style="position:absolute;left:71px;top:83.0px;" width="16" height="16" viewBox="0 0 16 16"><path d="M1 6H11V15H1Z" fill="#eeeeee" stroke="#aaa"></path><path d="M1 6L6 1H15L11 6Z" fill="#cdeefa" stroke="#6aaed0"></path><path d="M11 6L15 1V10L11 15Z" fill="#6ab8dc" stroke="#3a8ab8"></path></svg>
<div class="t" style="left:92.5px;top:85.44px;font-size:11px;color:#3e3e3e;">Extrude 1</div>
<svg style="position:absolute;left:57px;top:86.0px;" width="5" height="8" viewBox="0 0 5 8"><path d="M0 0L4.5 4L0 8Z" fill="#444"></path></svg>
<svg style="position:absolute;left:71px;top:101.0px;" width="16" height="16" viewBox="0 0 16 16"><path d="M1 3L3 1H7V5L5 7H1Z" fill="#a6def4" stroke="#2a8fc4"></path><path d="M5 5L10 10" stroke="#333" stroke-width="1"></path><path d="M9 11L11 9H15V14L13 16H9Z" fill="#b8eaa0" stroke="#4a9a30"></path></svg>
<div class="t" style="left:92.5px;top:103.44px;font-size:11px;color:#3e3e3e;">Convert</div>
<svg style="position:absolute;left:71px;top:119.0px;" width="16" height="16" viewBox="0 0 16 16"><path d="M2.5 13.5H9.5L10 12H3Z" fill="#9a9a9a"></path><path d="M1.5 5.5L4 1H14.5L9.5 12.5H2.5L5.5 5.5Z" fill="#c6f0b0" stroke="#4a9a30" stroke-width="0.9"></path><path d="M1.5 5.5H5.5" stroke="#888" stroke-width="1"></path></svg>
<div class="t" style="left:92.5px;top:121.44px;font-size:11px;color:#3e3e3e;">Planar 1(First Wall)</div>
<svg style="position:absolute;left:57px;top:122.0px;" width="5" height="8" viewBox="0 0 5 8"><path d="M0 0L4.5 4L0 8Z" fill="#444"></path></svg>
<svg style="position:absolute;left:71px;top:137.0px;" width="16" height="16" viewBox="0 0 16 16"><path d="M4.7 12.6L15.5 8.1V10.3L10.5 14.8H1Z" fill="#d6d6d6" stroke="#8a8a8a" stroke-width="0.8"></path><path d="M0.5 14.5V5.1L4.2 3.4V0.3L10.8 -1V8.5L4 12.8V14.5Z" fill="#c8f0b8" stroke="#4e9a38" stroke-width="0.9"></path><path d="M3 9.6L10.2 5.4" stroke="#1a6a98" stroke-width="1.3"></path></svg>
<div class="t" style="left:92.5px;top:139.44px;font-size:11px;color:#3e3e3e;">Flat 1</div>
<svg style="position:absolute;left:71px;top:155.0px;" width="16" height="16" viewBox="0 0 16 16"><path d="M4.7 12.6L15.5 8.1V10.3L10.5 14.8H1Z" fill="#d6d6d6" stroke="#8a8a8a" stroke-width="0.8"></path><path d="M0.5 14.5V5.1L4.2 3.4V0.3L10.8 -1V8.5L4 12.8V14.5Z" fill="#c8f0b8" stroke="#4e9a38" stroke-width="0.9"></path><path d="M3 9.6L10.2 5.4" stroke="#1a6a98" stroke-width="1.3"></path></svg>
<div class="t" style="left:92.5px;top:157.44px;font-size:11px;color:#3e3e3e;">Flat 2</div>
<svg style="position:absolute;left:71px;top:173.0px;" width="16" height="16" viewBox="0 0 16 16"><path d="M4.7 12.6L15.5 8.1V10.3L10.5 14.8H1Z" fill="#d6d6d6" stroke="#8a8a8a" stroke-width="0.8"></path><path d="M0.5 14.5V5.1L4.2 3.4V0.3L10.8 -1V8.5L4 12.8V14.5Z" fill="#c8f0b8" stroke="#4e9a38" stroke-width="0.9"></path><path d="M3 9.6L10.2 5.4" stroke="#1a6a98" stroke-width="1.3"></path></svg>
<div class="t" style="left:92.5px;top:175.44px;font-size:11px;color:#3e3e3e;">Flat 3</div>
<svg style="position:absolute;left:57px;top:176.0px;" width="5" height="8" viewBox="0 0 5 8"><path d="M0 0L4.5 4L0 8Z" fill="#444"></path></svg>
<svg style="position:absolute;left:71px;top:191.0px;" width="16" height="16" viewBox="0 0 16 16"><path d="M2.5 13.5H9.5L10 12H3Z" fill="#9a9a9a"></path><path d="M1.5 5.5L4 1H14.5L9.5 12.5H2.5L5.5 5.5Z" fill="#c6f0b0" stroke="#4a9a30" stroke-width="0.9"></path><path d="M1.5 5.5H5.5" stroke="#888" stroke-width="1"></path></svg>
<div class="t" style="left:92.5px;top:193.44px;font-size:11px;color:#3e3e3e;">Planar 2(First Wall)</div>
<svg style="position:absolute;left:57px;top:194.0px;" width="5" height="8" viewBox="0 0 5 8"><path d="M0 0L4.5 4L0 8Z" fill="#444"></path></svg>
<svg style="position:absolute;left:71px;top:209.0px;" width="16" height="16" viewBox="0 0 16 16"><path d="M4.7 12.6L15.5 8.1V10.3L10.5 14.8H1Z" fill="#d6d6d6" stroke="#8a8a8a" stroke-width="0.8"></path><path d="M0.5 14.5V5.1L4.2 3.4V0.3L10.8 -1V8.5L4 12.8V14.5Z" fill="#c8f0b8" stroke="#4e9a38" stroke-width="0.9"></path><path d="M3 9.6L10.2 5.4" stroke="#1a6a98" stroke-width="1.3"></path></svg>
<div class="t" style="left:92.5px;top:211.44px;font-size:11px;color:#3e3e3e;">Flat 4</div>
<svg style="position:absolute;left:71px;top:227.0px;" width="16" height="16" viewBox="0 0 16 16"><path d="M4.7 12.4L15.5 7.9V10.3L10.5 14.6H1Z" fill="#d6d6d6" stroke="#8a8a8a" stroke-width="0.8"></path><path d="M0.5 14.4V3Q0.5 0.5 3 0.5H10.8V6Q6 9 3 13Z" fill="#c8f0b8" stroke="#4e9a38" stroke-width="0.9"></path><path d="M2.6 1.5V7.5" stroke="#1a6a98" stroke-width="1.4"></path><path d="M3 1.2H10.6V5.6H3" fill="none" stroke="#1a5a80" stroke-width="1" stroke-dasharray="1 1"></path></svg>
<div class="t" style="left:92.5px;top:229.44px;font-size:11px;color:#3e3e3e;">Flange 1</div>
<svg style="position:absolute;left:71px;top:245.0px;" width="16" height="16" viewBox="0 0 16 16"><path d="M1 8H6V13H13V16H1Z" fill="#f2f2f2" stroke="#888"></path><path d="M1 8L4 6H8V11H13" fill="none" stroke="#888"></path><path d="M8 3L11 1H16V6L13 8H8Z" fill="#a6def4" stroke="#2a8fc4"></path></svg>
<div class="t" style="left:92.5px;top:247.44px;font-size:11px;color:#3e3e3e;">Trim Body 1</div>
<svg style="position:absolute;left:71px;top:263.0px;" width="16" height="16" viewBox="0 0 16 16"><path d="M4.7 12.4L15.5 7.9V10.3L10.5 14.6H1Z" fill="#d6d6d6" stroke="#8a8a8a" stroke-width="0.8"></path><path d="M0.5 14.4V3Q0.5 0.5 3 0.5H10.8V6Q6 9 3 13Z" fill="#c8f0b8" stroke="#4e9a38" stroke-width="0.9"></path><path d="M2.6 1.5V7.5" stroke="#1a6a98" stroke-width="1.4"></path><path d="M3 1.2H10.6V5.6H3" fill="none" stroke="#1a5a80" stroke-width="1" stroke-dasharray="1 1"></path></svg>
<div class="t" style="left:92.5px;top:265.44px;font-size:11px;color:#3e3e3e;">Flange 2</div>
<svg style="position:absolute;left:71px;top:281.0px;" width="16" height="16" viewBox="0 0 16 16"><path d="M1 15V4Q1 1 5 1L6.5 2V15Z" fill="none" stroke="#7a4ab0" stroke-width="0.9"></path><path d="M15 15V4Q15 1 11 1L9.5 2V15Z" fill="none" stroke="#7a4ab0" stroke-width="0.9"></path><path d="M8 0V16" stroke="#999" stroke-width="0.8"></path></svg>
<div class="t" style="left:92.5px;top:283.44px;font-size:11px;color:#3e3e3e;">Mirror 1</div>
<svg style="position:absolute;left:71px;top:299.0px;" width="16" height="16" viewBox="0 0 16 16"><circle cx="6" cy="11" r="5" fill="#a6def4" stroke="#2a8fc4"></circle><path d="M7 3L10 1H15V9L12 12H7Z" fill="#e8f6fc" stroke="#2a8fc4"></path><circle cx="6" cy="11" r="4" fill="#c6ecfa"></circle></svg>
<div class="t" style="left:92.5px;top:301.44px;font-size:11px;color:#3e3e3e;">Body Merge 1</div>
<svg style="position:absolute;left:71px;top:317.0px;" width="16" height="16" viewBox="0 0 16 16"><path d="M1 6H11V15H1Z" fill="#eeeeee" stroke="#aaa"></path><path d="M1 6L6 1H15L11 6Z" fill="#cdeefa" stroke="#6aaed0"></path><path d="M11 6L15 1V10L11 15Z" fill="#6ab8dc" stroke="#3a8ab8"></path></svg>
<div class="t" style="left:92.5px;top:319.44px;font-size:11px;color:#3e3e3e;">Extrude 2</div>
<svg style="position:absolute;left:57px;top:320.0px;" width="5" height="8" viewBox="0 0 5 8"><path d="M0 0L4.5 4L0 8Z" fill="#444"></path></svg>
<svg style="position:absolute;left:71px;top:335.0px;" width="16" height="16" viewBox="0 0 16 16"><circle cx="6" cy="11" r="5" fill="#eee" stroke="#bbb"></circle><path d="M7 3L10 1H15V9L12 12H7Z" fill="#e8f6fc" stroke="#2a8fc4"></path></svg>
<div class="t" style="left:92.5px;top:337.44px;font-size:11px;color:#3e3e3e;">Body Subtract 2</div>
<svg style="position:absolute;left:71px;top:353.0px;" width="16" height="16" viewBox="0 0 16 16"><path d="M1 8L4 6H9V13H13V16H1Z" fill="#a6def4" stroke="#2a8fc4"></path><path d="M7 3L10 1H16V8L13 10H7Z" fill="#cdeefa" stroke="#2a8fc4"></path></svg>
<div class="t" style="left:92.5px;top:355.44px;font-size:11px;color:#3e3e3e;">Split Body 2</div>
<svg style="position:absolute;left:71px;top:371.0px;" width="16" height="16" viewBox="0 0 16 16"><path d="M1 4L4 1H15V12L12 15H1Z" fill="#f4fbfe" stroke="#2a8fc4"></path><path d="M12 4L15 1V12L12 15Z" fill="#a6def4"></path><rect x="6" y="12" width="10" height="4" fill="#222"></rect></svg>
<div class="t" style="left:92.5px;top:373.44px;font-size:11px;color:#3e3e3e;">Remove Body 1</div>
<svg style="position:absolute;left:71px;top:389.0px;" width="16" height="16" viewBox="0 0 16 16"><path d="M1 15V4Q1 1 5 1L6.5 2V15Z" fill="none" stroke="#7a4ab0" stroke-width="0.9"></path><path d="M15 15V4Q15 1 11 1L9.5 2V15Z" fill="none" stroke="#7a4ab0" stroke-width="0.9"></path><path d="M8 0V16" stroke="#999" stroke-width="0.8"></path></svg>
<div class="t" style="left:92.5px;top:391.44px;font-size:11px;color:#3e3e3e;">Mirror 2</div>
<svg style="position:absolute;left:71px;top:407.0px;" width="16" height="16" viewBox="0 0 16 16"><circle cx="6" cy="11" r="5" fill="#a6def4" stroke="#2a8fc4"></circle><path d="M7 3L10 1H15V9L12 12H7Z" fill="#e8f6fc" stroke="#2a8fc4"></path><circle cx="6" cy="11" r="4" fill="#c6ecfa"></circle></svg>
<div class="t" style="left:92.5px;top:409.44px;font-size:11px;color:#3e3e3e;">Body Merge 3</div>
<svg style="position:absolute;left:71px;top:425.0px;" width="16" height="16" viewBox="0 0 16 16"><path d="M1 7H11V15H1Z" fill="#e8f8e0" stroke="#5aa040"></path><path d="M1 7L6 2H15L11 7Z" fill="#b6e6a0" stroke="#5aa040"></path><path d="M11 7L15 2V10L11 15Z" fill="#7acc5a" stroke="#4a9a30"></path><path d="M3 15V10H8V15" fill="#b6e6a0" stroke="#5aa040"></path></svg>
<div class="t" style="left:92.5px;top:427.44px;font-size:11px;color:#3e3e3e;">Extrude 3(First Wall)</div>
<svg style="position:absolute;left:57px;top:428.0px;" width="5" height="8" viewBox="0 0 5 8"><path d="M0 0L4.5 4L0 8Z" fill="#444"></path></svg>
<svg style="position:absolute;left:71px;top:443.0px;" width="16" height="16" viewBox="0 0 16 16"><path d="M1 15V4Q5 1 11 3" fill="none" stroke="#7a4ab0" stroke-width="1"></path><path d="M1 15Q5 12 11 13" fill="none" stroke="#7a4ab0" stroke-width="1"></path><path d="M4 7H5M6.5 7H7.5M9 7H10" stroke="#333" stroke-width="1.3"></path><path d="M11 4L15 7L11 10Z" fill="#333"></path></svg>
<div class="t" style="left:92.5px;top:445.44px;font-size:11px;color:#3e3e3e;">Moved Geometry 1</div>
<svg style="position:absolute;left:71px;top:461.0px;" width="16" height="16" viewBox="0 0 16 16"><path d="M1 15V4Q5 1 11 3" fill="none" stroke="#7a4ab0" stroke-width="1"></path><path d="M1 15Q5 12 11 13" fill="none" stroke="#7a4ab0" stroke-width="1"></path><path d="M4 7H5M6.5 7H7.5M9 7H10" stroke="#333" stroke-width="1.3"></path><path d="M11 4L15 7L11 10Z" fill="#333"></path></svg>
<div class="t" style="left:92.5px;top:463.44px;font-size:11px;color:#3e3e3e;">Moved Copy 2</div>
<svg style="position:absolute;left:71px;top:479.0px;" width="16" height="16" viewBox="0 0 16 16"><path d="M12 1L10 5M9 7L7 11M6 13L5 15" stroke="#8a6020" stroke-width="1.4"></path></svg>
<div class="t" style="left: 92.5px; top: 481.44px; font-size: 11px; color: rgb(62, 62, 62); transform: scaleX(0.8939);">A_2</div>
<svg style="position:absolute;left:71px;top:497.0px;" width="16" height="16" viewBox="0 0 16 16"><path d="M1 15V4Q5 1 11 3" fill="none" stroke="#7a4ab0" stroke-width="1"></path><path d="M1 15Q5 12 11 13" fill="none" stroke="#7a4ab0" stroke-width="1"></path><path d="M4 7H5M6.5 7H7.5M9 7H10" stroke="#333" stroke-width="1.3"></path><path d="M11 4L15 7L11 10Z" fill="#333"></path></svg>
<div class="t" style="left:92.5px;top:499.44px;font-size:11px;color:#3e3e3e;">Moved Copy 3</div>
<svg style="position:absolute;left:71px;top:515.0px;" width="16" height="16" viewBox="0 0 16 16"><rect x="0.5" y="0.5" width="12" height="13" fill="#f8f8f8" stroke="#999"></rect><path d="M0.5 4H12.5M0.5 8H12.5M4.5 0.5V13.5" stroke="#bbb"></path><rect x="6" y="7" width="9.5" height="9" rx="2" fill="#b8eaa0" stroke="#4a9a30"></rect><rect x="8" y="9" width="5" height="5" fill="none" stroke="#4a9a30" stroke-dasharray="1 1"></rect></svg>
<div class="t" style="left:92.5px;top:517.44px;font-size:11px;color:#3e3e3e;">Flat Pattern Manager</div>
<svg style="position:absolute;left:57px;top:518.0px;" width="5" height="8" viewBox="0 0 5 8"><path d="M0 0L4.5 4L0 8Z" fill="#444"></path></svg>
<div style="position:absolute;left:40px;top:540.0px;width:8px;height:1px;background:#bcc0c2"></div>
<svg style="position:absolute;left:51px;top:533.0px;" width="16" height="16" viewBox="0 0 16 16"><path d="M1 4L4 1H15V12L12 15H1Z" fill="#f4fbfe" stroke="#2a8fc4"></path><path d="M12 4L15 1V12L12 15Z" fill="#a6def4"></path><rect x="6" y="12" width="10" height="4" fill="#222"></rect></svg>
<div class="t" style="left:72.4px;top:535.44px;font-size:11px;color:#3e3e3e;">Remove Body 1</div>
<div style="position:absolute;left:32px;top:555.5px;width:315px;height:1.5px;background:#5a9ec0"></div>
<svg style="position:absolute;left:31px;top:553.0px;" width="4" height="6" viewBox="0 0 4 6"><path d="M0 3L4 0V6Z" fill="#5a9ec0"></path></svg>
<svg style="position:absolute;left:344px;top:553.0px;" width="4" height="6" viewBox="0 0 4 6"><path d="M4 3L0 0V6Z" fill="#5a9ec0"></path></svg>
<svg style="position:absolute;left:32px;top:564.25px;" width="16" height="16" viewBox="0 0 16 16"><path d="M1 6L4 3H14V12L11 15H1Z" fill="#a6def4" stroke="#2a8fc4"></path><path d="M1 6H11V15M11 6L14 3" fill="none" stroke="#2a8fc4"></path><path d="M11 6L14 3V12L11 15Z" fill="#5ab0dc"></path></svg>
<div class="t" style="left: 52.2px; top: 566.69px; font-size: 11px; color: rgb(62, 62, 62); transform: scaleX(0.9377);">COVER.PRT</div>
<svg style="position:absolute;left:17px;top:567.25px;" width="5" height="8" viewBox="0 0 5 8"><path d="M0 0L4.5 4L0 8Z" fill="#444"></path></svg>
<svg style="position:absolute;left:32px;top:582.25px;" width="16" height="16" viewBox="0 0 16 16"><path d="M1 6L4 3H14V12L11 15H1Z" fill="#a6def4" stroke="#2a8fc4"></path><path d="M1 6H11V15M11 6L14 3" fill="none" stroke="#2a8fc4"></path><path d="M11 6L14 3V12L11 15Z" fill="#5ab0dc"></path></svg>
<div class="t" style="left: 52.2px; top: 584.69px; font-size: 11px; color: rgb(62, 62, 62); transform: scaleX(0.9535);">MOUNT1.PRT</div>
<svg style="position:absolute;left:16px;top:586.75px;" width="8" height="5" viewBox="0 0 8 5"><path d="M0 0H8L4 4.5Z" fill="#555"></path></svg>
<div style="position:absolute;left:39px;top:599px;width:1px;height:117px;background:#bcc0c2"></div>
<svg style="position:absolute;left:51px;top:600.25px;" width="16" height="16" viewBox="0 0 16 16"><path d="M1 5L4 2H14V13L11 16H1Z" fill="#fbe8c0" stroke="#c9a050"></path><path d="M6 4L9 1H15V10L12 12H6Z" fill="#a6def4" stroke="#2a8fc4"></path><path d="M12 4L15 1V10L12 12Z" fill="#4aa6d6"></path></svg>
<div class="t" style="left:72.4px;top:602.69px;font-size:11px;color:#3e3e3e;">Placement</div>
<svg style="position:absolute;left:37px;top:603.25px;" width="5" height="8" viewBox="0 0 5 8"><path d="M0 0L4.5 4L0 8Z" fill="#444"></path></svg>
<svg style="position:absolute;left:51px;top:618.25px;" width="16" height="16" viewBox="0 0 16 16"><rect x="0.5" y="0.5" width="14" height="15" fill="#fafafa" stroke="#888"></rect><g fill="#2a8fc4"><rect x="2.5" y="3" width="3" height="2.5"></rect><rect x="2.5" y="7" width="3" height="2.5"></rect><rect x="2.5" y="11" width="3" height="2.5"></rect></g><path d="M7 4H13M7 6H12M7 8H13M7 10H12M7 12H13" stroke="#777"></path></svg>
<div class="t" style="left:72.4px;top:620.69px;font-size:11px;color:#3e3e3e;">Design Items</div>
<svg style="position:absolute;left:37px;top:621.25px;" width="5" height="8" viewBox="0 0 5 8"><path d="M0 0L4.5 4L0 8Z" fill="#444"></path></svg>
<div style="position:absolute;left:40px;top:643.25px;width:8px;height:1px;background:#bcc0c2"></div>
<svg style="position:absolute;left:51px;top:636.25px;" width="16" height="16" viewBox="0 0 16 16"><path d="M4.5 1.5H14.5L11.5 9.5H1.5Z" fill="none" stroke="#7d5a1c" stroke-width="1.3"></path></svg>
<div class="t" style="left: 72.4px; top: 638.69px; font-size: 11px; color: rgb(62, 62, 62); transform: scaleX(0.9201);">RIGHT</div>
<div style="position:absolute;left:40px;top:661.25px;width:8px;height:1px;background:#bcc0c2"></div>
<svg style="position:absolute;left:51px;top:654.25px;" width="16" height="16" viewBox="0 0 16 16"><path d="M4.5 1.5H14.5L11.5 9.5H1.5Z" fill="none" stroke="#7d5a1c" stroke-width="1.3"></path></svg>
<div class="t" style="left: 72.4px; top: 656.69px; font-size: 11px; color: rgb(62, 62, 62); transform: scaleX(0.9143);">TOP</div>
<div style="position:absolute;left:40px;top:679.25px;width:8px;height:1px;background:#bcc0c2"></div>
<svg style="position:absolute;left:51px;top:672.25px;" width="16" height="16" viewBox="0 0 16 16"><path d="M4.5 1.5H14.5L11.5 9.5H1.5Z" fill="none" stroke="#7d5a1c" stroke-width="1.3"></path></svg>
<div class="t" style="left: 72.4px; top: 674.69px; font-size: 11px; color: rgb(62, 62, 62); transform: scaleX(0.8973);">FRONT</div>
<div style="position:absolute;left:40px;top:697.25px;width:8px;height:1px;background:#bcc0c2"></div>
<svg style="position:absolute;left:51px;top:690.25px;" width="16" height="16" viewBox="0 0 16 16"><path d="M5 1V10.5L15 10.5M5 10.5L1 14.5" stroke="#7d5a1c" stroke-width="1.1" fill="none"></path><path d="M3.8 2.5L5 0L6.2 2.5ZM13 9.3L15.5 10.5L13 11.7Z" fill="#7d5a1c"></path></svg>
<div class="t" style="left: 72.4px; top: 692.69px; font-size: 11px; color: rgb(62, 62, 62); transform: scaleX(0.8372);">PRT_CSYS_DEF</div>
<div style="position:absolute;left:40px;top:715.25px;width:8px;height:1px;background:#bcc0c2"></div>
<svg style="position:absolute;left:51px;top:708.25px;" width="16" height="16" viewBox="0 0 16 16"><rect x="1" y="1" width="8" height="9" fill="#eee" stroke="#aaa" stroke-width="0.8"></rect><rect x="0" y="2" width="2" height="8" fill="#888"></rect><path d="M3 3L7 7M7 7V5M7 7H5" stroke="#222" stroke-width="1"></path><rect x="8" y="7" width="8" height="9" fill="#a6def4"></rect><rect x="8" y="7" width="2.5" height="9" fill="#1a6a98"></rect></svg>
<div class="t" style="left: 72.4px; top: 710.69px; font-size: 11px; color: rgb(62, 62, 62); transform: scaleX(1.0079);">Extern Copy Geom id 40</div>
<div style="position:absolute;left:32px;top:732px;width:315px;height:1.5px;background:#5a9ec0"></div>
<svg style="position:absolute;left:31px;top:729.5px;" width="4" height="6" viewBox="0 0 4 6"><path d="M0 3L4 0V6Z" fill="#5a9ec0"></path></svg>
<svg style="position:absolute;left:344px;top:729.5px;" width="4" height="6" viewBox="0 0 4 6"><path d="M4 3L0 0V6Z" fill="#5a9ec0"></path></svg>
<svg style="position:absolute;left:32px;top:740.25px;" width="16" height="16" viewBox="0 0 16 16"><path d="M1 6L4 3H14V12L11 15H1Z" fill="#a6def4" stroke="#2a8fc4"></path><path d="M1 6H11V15M11 6L14 3" fill="none" stroke="#2a8fc4"></path><path d="M11 6L14 3V12L11 15Z" fill="#5ab0dc"></path></svg>
<div class="t" style="left: 52.2px; top: 742.69px; font-size: 11px; color: rgb(62, 62, 62); transform: scaleX(0.9564);">MOUNT2.PRT</div>
<svg style="position:absolute;left:17px;top:743.25px;" width="5" height="8" viewBox="0 0 5 8"><path d="M0 0L4.5 4L0 8Z" fill="#444"></path></svg>
<svg style="position:absolute;left:32px;top:758.25px;" width="16" height="16" viewBox="0 0 16 16"><path d="M1 6L4 3H14V12L11 15H1Z" fill="#a6def4" stroke="#2a8fc4"></path><path d="M1 6H11V15M11 6L14 3" fill="none" stroke="#2a8fc4"></path><path d="M11 6L14 3V12L11 15Z" fill="#5ab0dc"></path></svg>
<div class="t" style="left: 52.2px; top: 760.69px; font-size: 11px; color: rgb(62, 62, 62); transform: scaleX(0.9564);">MOUNT3.PRT</div>
<svg style="position:absolute;left:17px;top:761.25px;" width="5" height="8" viewBox="0 0 5 8"><path d="M0 0L4.5 4L0 8Z" fill="#444"></path></svg>
<svg style="position:absolute;left:32px;top:776.25px;" width="16" height="16" viewBox="0 0 16 16"><path d="M1 6L4 3H14V12L11 15H1Z" fill="#a6def4" stroke="#2a8fc4"></path><path d="M1 6H11V15M11 6L14 3" fill="none" stroke="#2a8fc4"></path><path d="M11 6L14 3V12L11 15Z" fill="#5ab0dc"></path></svg>
<div class="t" style="left: 52.2px; top: 778.69px; font-size: 11px; color: rgb(62, 62, 62); transform: scaleX(0.9564);">MOUNT4.PRT</div>
<svg style="position:absolute;left:17px;top:779.25px;" width="5" height="8" viewBox="0 0 5 8"><path d="M0 0L4.5 4L0 8Z" fill="#444"></path></svg>
</div></div>
<div style="position:absolute;left:348px;top:252px;width:15px;height:784px;background:#dcdee0"></div>
<div style="position:absolute;left:348px;top:252px;width:15px;height:15px;background:#f7f7f7;border:1px solid #c8cacc;box-sizing:border-box"></div>
<svg style="position:absolute;left:351px;top:257px;" width="9" height="5" viewBox="0 0 9 5"><path d="M0 5H9L4.5 0Z" fill="#999"></path></svg>
<div style="position:absolute;left:348px;top:433px;width:15px;height:572px;background:#f5f5f5;border:1px solid #c0c2c4;box-sizing:border-box"></div>
<div style="position:absolute;left:348px;top:1021px;width:15px;height:15px;background:#f7f7f7;border:1px solid #c8cacc;box-sizing:border-box"></div>
<svg style="position:absolute;left:351px;top:1026px;" width="9" height="5" viewBox="0 0 9 5"><path d="M0 0H9L4.5 5Z" fill="#999"></path></svg>
<svg style="position:absolute;left:0;top:0" width="1920" height="1080" viewBox="0 0 1920 1080"><polygon points="868,294.5 1455,294.5 1327.2,716.5 739,716.5" fill="#ffff00"></polygon><polygon points="1454.6,296 1403.35289,464.3 1540.7,464.3" fill="#a6a600"></polygon><polygon points="1455.6,298.5 1459,298.5 1541,464.3 1536,466" fill="#b4b400"></polygon><line x1="1452.8" y1="306" x2="1529.6" y2="466" stroke="#2e2e10" stroke-width="0.9"></line><line x1="1455.6" y1="298.5" x2="1536" y2="466" stroke="#2e2e10" stroke-width="0.9"></line><line x1="1459" y1="298.5" x2="1541" y2="465" stroke="#3a3a10" stroke-width="1"></line><circle cx="1456" cy="298" r="2.5" fill="none" stroke="#333" stroke-width="0.8"></circle><polygon points="1403.35289,464.3 1540.7,464.3 1544,472 1401.0221,472" fill="#e4e400"></polygon><polygon points="1402.8383,466 1541,466 1542,469 1401.9302,469" fill="#f2f200"></polygon><polygon points="1401.0221,472 1544,472 1547,481 1398.2977999999998,481" fill="#b4b400"></polygon><line x1="1403.35289" y1="464.3" x2="1540.7" y2="464.3" stroke="#333" stroke-width="1"></line><polygon points="1536,466 1541,464.3 1549,478 1546,481" fill="#2a3430"></polygon><line x1="1398.2977999999998" y1="480.5" x2="1546" y2="480.5" stroke="#2a3a34" stroke-width="1.2"></line><polygon points="1398.3,481 1546,481 1416,894 1412,883 1327,716.5" fill="#8f9a8a"></polygon><polygon points="1393,499 1487,692 1329,692" fill="#8b887c"></polygon><polygon points="739,716.5 1327,716.5 1412,883 823,883" fill="#a6a600"></polygon><polygon points="742,707 1326,707 1323,716.5 739,716.5" fill="#f4f400"></polygon><line x1="742" y1="706.5" x2="1326" y2="706.5" stroke="#5a5520" stroke-width="1"></line><line x1="739" y1="716.8" x2="1327" y2="716.8" stroke="#2a2a20" stroke-width="1.4"></line><polygon points="824.5,895.5 1420,895.5 1422,901.5 820.5,901.5" fill="#dccbcc"></polygon><line x1="820.5" y1="901.5" x2="1422" y2="901.5" stroke="#8a6064" stroke-width="1.2"></line><line x1="824.5" y1="895.5" x2="820.5" y2="901.5" stroke="#8a6064" stroke-width="0.8"></line><polygon points="823.7485,883 1412,883 1415,888 826.2935,888" fill="#7a7a08"></polygon><line x1="823.7485" y1="883.5" x2="1412" y2="883.5" stroke="#3e3e10" stroke-width="1"></line><line x1="825.2755" y1="886" x2="1414" y2="886" stroke="#3e3e10" stroke-width="1"></line><polygon points="826.2935,888 1415,888 1420,897 830.8745,897" fill="#6f8577"></polygon><polygon points="826.2935,888 1415,888 1416,890.5 827.566,890.5" fill="#9cb3a4"></polygon><line x1="830.62" y1="896.5" x2="1419" y2="896.5" stroke="#1e2824" stroke-width="1.4"></line><polygon points="1546,475 1552,475 1422,901 1416,894" fill="#e6d6d8"></polygon><line x1="1549" y1="474" x2="1420" y2="900" stroke="#8a6064" stroke-width="0.8"></line><line x1="1553" y1="474" x2="1424" y2="900" stroke="#8a6064" stroke-width="0.8"></line><line x1="868" y1="296" x2="739" y2="716" stroke="#2a2a40" stroke-width="1.3"></line><line x1="739" y1="717" x2="832" y2="898" stroke="#26383a" stroke-width="1.6"></line><line x1="868" y1="296.8" x2="1452" y2="296.8" stroke="#3a3a20" stroke-width="1.4"></line><line x1="1453.7" y1="298" x2="1327.2" y2="716.5" stroke="#2a2a20" stroke-width="1.3"></line><line x1="1545.5" y1="481" x2="1415.5" y2="894" stroke="#26383a" stroke-width="2.6"></line><line x1="1547.5" y1="481" x2="1417.5" y2="894" stroke="#6a7a72" stroke-width="0.8"></line><polygon points="1327,717 1412,883 1417,888 1331,717" fill="#d6d600"></polygon><line x1="1331" y1="718" x2="1416" y2="886" stroke="#a8ccc0" stroke-width="1"></line><line x1="1325" y1="717" x2="1410" y2="883" stroke="#2a3020" stroke-width="1"></line><g transform="translate(1075.4 801.25) rotate(16)"><ellipse cx="0" cy="1.5" rx="85.5" ry="49.4" fill="#ecec20"></ellipse><ellipse cx="0" cy="0" rx="85.5" ry="49.4" fill="#95a18f" stroke="#2a2a2a" stroke-width="1.1"></ellipse></g><clipPath id="ec"><ellipse cx="0" cy="0" rx="84.9" ry="48.8" transform="translate(1075.4 801.25) rotate(16)"></ellipse></clipPath><polygon points="1026.5,700 1300,700 1300,900 1118.8,900" fill="#8d897a" clip-path="url(#ec)"></polygon><line x1="796" y1="500" x2="888" y2="689" stroke="#82525c" stroke-width="1"></line><line x1="800" y1="500" x2="892" y2="689" stroke="#82525c" stroke-width="1"></line><line x1="953" y1="473" x2="824.5" y2="901.5" stroke="#82525c" stroke-width="1"></line><line x1="948" y1="478" x2="820.5" y2="901.5" stroke="#82525c" stroke-width="1"></line><line x1="1257" y1="476" x2="1131" y2="888" stroke="#82525c" stroke-width="1"></line><line x1="1262" y1="490" x2="1141" y2="888" stroke="#82525c" stroke-width="1"></line><line x1="1161.5" y1="287" x2="1030" y2="716" stroke="#82525c" stroke-width="1.9"></line><line x1="1034" y1="716" x2="1128" y2="911" stroke="#82525c" stroke-width="1.3"></line><line x1="1161" y1="287" x2="1254" y2="473" stroke="#82525c" stroke-width="1"></line><polyline points="1254,473 1262,490 1257,500" fill="none" stroke="#82525c" stroke-width="1"></polyline><line x1="953" y1="473" x2="1552" y2="473" stroke="#82525c" stroke-width="1.1"></line><line x1="797" y1="500" x2="1393" y2="500" stroke="#82525c" stroke-width="1.1"></line><line x1="1393" y1="500" x2="1487" y2="692" stroke="#82525c" stroke-width="1"></line><line x1="1396" y1="500" x2="1490" y2="692" stroke="#82525c" stroke-width="1"></line><line x1="1227" y1="313" x2="1055" y2="870" stroke="#82525c" stroke-width="1" stroke-dasharray="5 3"></line><line x1="1096" y1="500" x2="1180" y2="662" stroke="#82525c" stroke-width="1" stroke-dasharray="5 3"></line><line x1="890" y1="688.5" x2="1496" y2="688.5" stroke="#82525c" stroke-width="0.9"></line><line x1="889" y1="692.2" x2="1496" y2="692.2" stroke="#82525c" stroke-width="0.9"></line><line x1="895.6" y1="704" x2="1496" y2="704" stroke="#82525c" stroke-width="0.9"></line><line x1="889.4" y1="692" x2="895.6" y2="704" stroke="#82525c" stroke-width="0.9"></line><polyline points="1487,692 1496,704" fill="none" stroke="#82525c" stroke-width="1"></polyline><polyline points="959,539 1025,539 1018,566.5 951,566.5 959,539" fill="none" stroke="#82525c" stroke-width="1"></polyline><polyline points="915,689 967,689 986,701.5 920,701.5 915,689" fill="none" stroke="#82525c" stroke-width="1"></polyline><polyline points="1433.6,539 1499.8,539 1492.6,566.2 1425.2,566.2 1433.6,539" fill="none" stroke="#82525c" stroke-width="1"></polyline><polyline points="1389,689.4 1456.5,689.4 1461.3,701.5 1395,701.5 1389,689.4" fill="none" stroke="#82525c" stroke-width="1"></polyline><polyline points="876.6,808.4 941.4,808.4 934,835.6 866.9,835.6 876.6,808.4" fill="none" stroke="#82525c" stroke-width="1"></polyline><polyline points="1351,808.4 1417.3,808.4 1409.2,835.6 1342.2,835.6 1351,808.4" fill="none" stroke="#82525c" stroke-width="1"></polyline><polyline points="1235,545 1243,560 1231,582" fill="none" stroke="#82525c" stroke-width="1"></polyline><polyline points="1147,835 1157,852 1141,858" fill="none" stroke="#82525c" stroke-width="1"></polyline><line x1="1123" y1="890" x2="1130" y2="918" stroke="#82525c" stroke-width="1"></line><line x1="796" y1="494" x2="800" y2="504" stroke="#82525c" stroke-width="1"></line><path transform="translate(1026.50 527.40) scale(11.151 11.200)" d="M0 0H0.78M0.39 0V1" fill="none" stroke="#82525c" stroke-width="1.05" vector-effect="non-scaling-stroke"></path><path transform="translate(1037.65 527.40) scale(11.151 11.200)" d="M0.42 0Q0 0 0 0.5Q0 1 0.42 1Q0.84 1 0.84 0.5Q0.84 0 0.42 0Z" fill="none" stroke="#82525c" stroke-width="1.05" vector-effect="non-scaling-stroke"></path><path transform="translate(1049.47 527.40) scale(11.151 11.200)" d="M0 1V0H0.45Q0.72 0 0.72 0.27Q0.72 0.54 0.45 0.54H0" fill="none" stroke="#82525c" stroke-width="1.05" vector-effect="non-scaling-stroke"></path><path transform="translate(1232.30 569.40) scale(11.616 11.200)" d="M0 1V0H0.45Q0.72 0 0.72 0.27Q0.72 0.54 0.45 0.54H0M0.42 0.54L0.74 1" fill="none" stroke="#82525c" stroke-width="1.05" vector-effect="non-scaling-stroke"></path><path transform="translate(1243.45 569.40) scale(11.616 11.200)" d="M0 0V1" fill="none" stroke="#82525c" stroke-width="1.05" vector-effect="non-scaling-stroke"></path><path transform="translate(1246.01 569.40) scale(11.616 11.200)" d="M0.8 0.2Q0.66 0 0.42 0Q0 0 0 0.5Q0 1 0.42 1Q0.82 1 0.82 0.55H0.45" fill="none" stroke="#82525c" stroke-width="1.05" vector-effect="non-scaling-stroke"></path><path transform="translate(1258.09 569.40) scale(11.616 11.200)" d="M0 0V1M0.74 0V1M0 0.5H0.74" fill="none" stroke="#82525c" stroke-width="1.05" vector-effect="non-scaling-stroke"></path><path transform="translate(1269.24 569.40) scale(11.616 11.200)" d="M0 0H0.78M0.39 0V1" fill="none" stroke="#82525c" stroke-width="1.05" vector-effect="non-scaling-stroke"></path><path transform="translate(914.60 676.40) scale(11.272 11.200)" d="M0.66 0H0V1M0 0.48H0.55" fill="none" stroke="#82525c" stroke-width="1.05" vector-effect="non-scaling-stroke"></path><path transform="translate(924.52 676.40) scale(11.272 11.200)" d="M0 1V0H0.45Q0.72 0 0.72 0.27Q0.72 0.54 0.45 0.54H0M0.42 0.54L0.74 1" fill="none" stroke="#82525c" stroke-width="1.05" vector-effect="non-scaling-stroke"></path><path transform="translate(935.34 676.40) scale(11.272 11.200)" d="M0.42 0Q0 0 0 0.5Q0 1 0.42 1Q0.84 1 0.84 0.5Q0.84 0 0.42 0Z" fill="none" stroke="#82525c" stroke-width="1.05" vector-effect="non-scaling-stroke"></path><path transform="translate(947.29 676.40) scale(11.272 11.200)" d="M0 1V0L0.74 1V0" fill="none" stroke="#82525c" stroke-width="1.05" vector-effect="non-scaling-stroke"></path><path transform="translate(958.11 676.40) scale(11.272 11.200)" d="M0 0H0.78M0.39 0V1" fill="none" stroke="#82525c" stroke-width="1.05" vector-effect="non-scaling-stroke"></path><path transform="translate(796.00 487.60) scale(11.650 11.200)" d="M0.66 0H0V1M0 0.48H0.55" fill="none" stroke="#82525c" stroke-width="1.05" vector-effect="non-scaling-stroke"></path><path transform="translate(806.25 487.60) scale(11.650 11.200)" d="M0 1V0H0.45Q0.72 0 0.72 0.27Q0.72 0.54 0.45 0.54H0M0.42 0.54L0.74 1" fill="none" stroke="#82525c" stroke-width="1.05" vector-effect="non-scaling-stroke"></path><path transform="translate(817.44 487.60) scale(11.650 11.200)" d="M0.42 0Q0 0 0 0.5Q0 1 0.42 1Q0.84 1 0.84 0.5Q0.84 0 0.42 0Z" fill="none" stroke="#82525c" stroke-width="1.05" vector-effect="non-scaling-stroke"></path><path transform="translate(829.79 487.60) scale(11.650 11.200)" d="M0 1V0L0.74 1V0" fill="none" stroke="#82525c" stroke-width="1.05" vector-effect="non-scaling-stroke"></path><path transform="translate(840.97 487.60) scale(11.650 11.200)" d="M0 0H0.78M0.39 0V1" fill="none" stroke="#82525c" stroke-width="1.05" vector-effect="non-scaling-stroke"></path><path transform="translate(852.62 487.60) scale(11.650 11.200)" d="M0 1.14H0.74" fill="none" stroke="#82525c" stroke-width="1.05" vector-effect="non-scaling-stroke"></path><path transform="translate(863.81 487.60) scale(11.650 11.200)" d="M0 0.22L0.36 0V1" fill="none" stroke="#82525c" stroke-width="1.05" vector-effect="non-scaling-stroke"></path><path transform="translate(796.00 487.60) scale(10.764 11.200)" d="M0 1L0.4 0L0.8 1M0.14 0.65H0.66" fill="none" stroke="#82525c" stroke-width="1.05" vector-effect="non-scaling-stroke"></path><path transform="translate(806.98 487.60) scale(10.764 11.200)" d="M0.7 0.15Q0.58 0 0.36 0Q0.02 0 0.02 0.26Q0.02 0.47 0.36 0.5Q0.72 0.53 0.72 0.75Q0.72 1 0.36 1Q0.1 1 0 0.82" fill="none" stroke="#82525c" stroke-width="1.05" vector-effect="non-scaling-stroke"></path><path transform="translate(817.10 487.60) scale(10.764 11.200)" d="M0 1V0L0.43 1L0.86 0V1" fill="none" stroke="#82525c" stroke-width="1.05" vector-effect="non-scaling-stroke"></path><path transform="translate(828.72 487.60) scale(10.764 11.200)" d="M0 1.14H0.74" fill="none" stroke="#82525c" stroke-width="1.05" vector-effect="non-scaling-stroke"></path><path transform="translate(839.06 487.60) scale(10.764 11.200)" d="M0.66 0H0V1M0 0.48H0.55" fill="none" stroke="#82525c" stroke-width="1.05" vector-effect="non-scaling-stroke"></path><path transform="translate(848.53 487.60) scale(10.764 11.200)" d="M0 1V0H0.45Q0.72 0 0.72 0.27Q0.72 0.54 0.45 0.54H0M0.42 0.54L0.74 1" fill="none" stroke="#82525c" stroke-width="1.05" vector-effect="non-scaling-stroke"></path><path transform="translate(858.86 487.60) scale(10.764 11.200)" d="M0.42 0Q0 0 0 0.5Q0 1 0.42 1Q0.84 1 0.84 0.5Q0.84 0 0.42 0Z" fill="none" stroke="#82525c" stroke-width="1.05" vector-effect="non-scaling-stroke"></path><path transform="translate(870.27 487.60) scale(10.764 11.200)" d="M0 1V0L0.74 1V0" fill="none" stroke="#82525c" stroke-width="1.05" vector-effect="non-scaling-stroke"></path><path transform="translate(880.60 487.60) scale(10.764 11.200)" d="M0 0H0.78M0.39 0V1" fill="none" stroke="#82525c" stroke-width="1.05" vector-effect="non-scaling-stroke"></path><path transform="translate(1551.00 461.60) scale(12.731 11.200)" d="M0 0H0.78M0.39 0V1" fill="none" stroke="#82525c" stroke-width="1.05" vector-effect="non-scaling-stroke"></path><path transform="translate(1563.73 461.60) scale(12.731 11.200)" d="M0.42 0Q0 0 0 0.5Q0 1 0.42 1Q0.84 1 0.84 0.5Q0.84 0 0.42 0Z" fill="none" stroke="#82525c" stroke-width="1.05" vector-effect="non-scaling-stroke"></path><path transform="translate(1577.23 461.60) scale(12.731 11.200)" d="M0 1V0H0.45Q0.72 0 0.72 0.27Q0.72 0.54 0.45 0.54H0" fill="none" stroke="#82525c" stroke-width="1.05" vector-effect="non-scaling-stroke"></path><path transform="translate(1589.19 461.60) scale(12.731 11.200)" d="M0 1.14H0.74" fill="none" stroke="#82525c" stroke-width="1.05" vector-effect="non-scaling-stroke"></path><path transform="translate(1601.42 461.60) scale(12.731 11.200)" d="M0 0.22L0.36 0V1" fill="none" stroke="#82525c" stroke-width="1.05" vector-effect="non-scaling-stroke"></path><path transform="translate(1551.00 461.60) scale(11.357 11.200)" d="M0 1L0.4 0L0.8 1M0.14 0.65H0.66" fill="none" stroke="#82525c" stroke-width="1.05" vector-effect="non-scaling-stroke"></path><path transform="translate(1562.58 461.60) scale(11.357 11.200)" d="M0.7 0.15Q0.58 0 0.36 0Q0.02 0 0.02 0.26Q0.02 0.47 0.36 0.5Q0.72 0.53 0.72 0.75Q0.72 1 0.36 1Q0.1 1 0 0.82" fill="none" stroke="#82525c" stroke-width="1.05" vector-effect="non-scaling-stroke"></path><path transform="translate(1573.26 461.60) scale(11.357 11.200)" d="M0 1V0L0.43 1L0.86 0V1" fill="none" stroke="#82525c" stroke-width="1.05" vector-effect="non-scaling-stroke"></path><path transform="translate(1585.53 461.60) scale(11.357 11.200)" d="M0 1.14H0.74" fill="none" stroke="#82525c" stroke-width="1.05" vector-effect="non-scaling-stroke"></path><path transform="translate(1596.43 461.60) scale(11.357 11.200)" d="M0 0H0.78M0.39 0V1" fill="none" stroke="#82525c" stroke-width="1.05" vector-effect="non-scaling-stroke"></path><path transform="translate(1607.78 461.60) scale(11.357 11.200)" d="M0.42 0Q0 0 0 0.5Q0 1 0.42 1Q0.84 1 0.84 0.5Q0.84 0 0.42 0Z" fill="none" stroke="#82525c" stroke-width="1.05" vector-effect="non-scaling-stroke"></path><path transform="translate(1619.82 461.60) scale(11.357 11.200)" d="M0 1V0H0.45Q0.72 0 0.72 0.27Q0.72 0.54 0.45 0.54H0" fill="none" stroke="#82525c" stroke-width="1.05" vector-effect="non-scaling-stroke"></path><path transform="translate(1499.80 527.40) scale(11.151 11.200)" d="M0 0H0.78M0.39 0V1" fill="none" stroke="#82525c" stroke-width="1.05" vector-effect="non-scaling-stroke"></path><path transform="translate(1510.95 527.40) scale(11.151 11.200)" d="M0.42 0Q0 0 0 0.5Q0 1 0.42 1Q0.84 1 0.84 0.5Q0.84 0 0.42 0Z" fill="none" stroke="#82525c" stroke-width="1.05" vector-effect="non-scaling-stroke"></path><path transform="translate(1522.77 527.40) scale(11.151 11.200)" d="M0 1V0H0.45Q0.72 0 0.72 0.27Q0.72 0.54 0.45 0.54H0" fill="none" stroke="#82525c" stroke-width="1.05" vector-effect="non-scaling-stroke"></path><path transform="translate(1389.00 676.40) scale(11.207 11.200)" d="M0.66 0H0V1M0 0.48H0.55" fill="none" stroke="#82525c" stroke-width="1.05" vector-effect="non-scaling-stroke"></path><path transform="translate(1398.86 676.40) scale(11.207 11.200)" d="M0 1V0H0.45Q0.72 0 0.72 0.27Q0.72 0.54 0.45 0.54H0M0.42 0.54L0.74 1" fill="none" stroke="#82525c" stroke-width="1.05" vector-effect="non-scaling-stroke"></path><path transform="translate(1409.62 676.40) scale(11.207 11.200)" d="M0.42 0Q0 0 0 0.5Q0 1 0.42 1Q0.84 1 0.84 0.5Q0.84 0 0.42 0Z" fill="none" stroke="#82525c" stroke-width="1.05" vector-effect="non-scaling-stroke"></path><path transform="translate(1421.50 676.40) scale(11.207 11.200)" d="M0 1V0L0.74 1V0" fill="none" stroke="#82525c" stroke-width="1.05" vector-effect="non-scaling-stroke"></path><path transform="translate(1432.26 676.40) scale(11.207 11.200)" d="M0 0H0.78M0.39 0V1" fill="none" stroke="#82525c" stroke-width="1.05" vector-effect="non-scaling-stroke"></path><path transform="translate(1189.00 690.40) scale(10.885 11.200)" d="M0 1V0H0.45Q0.72 0 0.72 0.27Q0.72 0.54 0.45 0.54H0" fill="none" stroke="#82525c" stroke-width="1.05" vector-effect="non-scaling-stroke"></path><path transform="translate(1199.23 690.40) scale(10.885 11.200)" d="M0 1V0H0.45Q0.72 0 0.72 0.27Q0.72 0.54 0.45 0.54H0M0.42 0.54L0.74 1" fill="none" stroke="#82525c" stroke-width="1.05" vector-effect="non-scaling-stroke"></path><path transform="translate(1209.68 690.40) scale(10.885 11.200)" d="M0 0H0.78M0.39 0V1" fill="none" stroke="#82525c" stroke-width="1.05" vector-effect="non-scaling-stroke"></path><path transform="translate(1220.57 690.40) scale(10.885 11.200)" d="M0 1.14H0.74" fill="none" stroke="#82525c" stroke-width="1.05" vector-effect="non-scaling-stroke"></path><path transform="translate(1231.02 690.40) scale(10.885 11.200)" d="M0.78 0.2Q0.65 0 0.4 0Q0 0 0 0.5Q0 1 0.4 1Q0.65 1 0.78 0.8" fill="none" stroke="#82525c" stroke-width="1.05" vector-effect="non-scaling-stroke"></path><path transform="translate(1241.90 690.40) scale(10.885 11.200)" d="M0.7 0.15Q0.58 0 0.36 0Q0.02 0 0.02 0.26Q0.02 0.47 0.36 0.5Q0.72 0.53 0.72 0.75Q0.72 1 0.36 1Q0.1 1 0 0.82" fill="none" stroke="#82525c" stroke-width="1.05" vector-effect="non-scaling-stroke"></path><path transform="translate(1252.13 690.40) scale(10.885 11.200)" d="M0 0L0.39 0.5L0.78 0M0.39 0.5V1" fill="none" stroke="#82525c" stroke-width="1.05" vector-effect="non-scaling-stroke"></path><path transform="translate(1263.02 690.40) scale(10.885 11.200)" d="M0.7 0.15Q0.58 0 0.36 0Q0.02 0 0.02 0.26Q0.02 0.47 0.36 0.5Q0.72 0.53 0.72 0.75Q0.72 1 0.36 1Q0.1 1 0 0.82" fill="none" stroke="#82525c" stroke-width="1.05" vector-effect="non-scaling-stroke"></path><path transform="translate(1273.25 690.40) scale(10.885 11.200)" d="M0 1.14H0.74" fill="none" stroke="#82525c" stroke-width="1.05" vector-effect="non-scaling-stroke"></path><path transform="translate(1283.70 690.40) scale(10.885 11.200)" d="M0 0V1H0.32Q0.75 1 0.75 0.5Q0.75 0 0.32 0Z" fill="none" stroke="#82525c" stroke-width="1.05" vector-effect="non-scaling-stroke"></path><path transform="translate(1294.26 690.40) scale(10.885 11.200)" d="M0.68 0H0V1H0.68M0 0.48H0.55" fill="none" stroke="#82525c" stroke-width="1.05" vector-effect="non-scaling-stroke"></path><path transform="translate(1304.05 690.40) scale(10.885 11.200)" d="M0.66 0H0V1M0 0.48H0.55" fill="none" stroke="#82525c" stroke-width="1.05" vector-effect="non-scaling-stroke"></path><path transform="translate(1313.63 690.40) scale(10.885 11.200)" d="M0 1.14H0.74" fill="none" stroke="#82525c" stroke-width="1.05" vector-effect="non-scaling-stroke"></path><path transform="translate(1324.08 690.40) scale(10.885 11.200)" d="M0 0.22L0.36 0V1" fill="none" stroke="#82525c" stroke-width="1.05" vector-effect="non-scaling-stroke"></path><path transform="translate(1189.00 690.40) scale(10.466 11.200)" d="M0 1L0.4 0L0.8 1M0.14 0.65H0.66" fill="none" stroke="#82525c" stroke-width="1.05" vector-effect="non-scaling-stroke"></path><path transform="translate(1199.68 690.40) scale(10.466 11.200)" d="M0.7 0.15Q0.58 0 0.36 0Q0.02 0 0.02 0.26Q0.02 0.47 0.36 0.5Q0.72 0.53 0.72 0.75Q0.72 1 0.36 1Q0.1 1 0 0.82" fill="none" stroke="#82525c" stroke-width="1.05" vector-effect="non-scaling-stroke"></path><path transform="translate(1209.51 690.40) scale(10.466 11.200)" d="M0 1V0L0.43 1L0.86 0V1" fill="none" stroke="#82525c" stroke-width="1.05" vector-effect="non-scaling-stroke"></path><path transform="translate(1220.82 690.40) scale(10.466 11.200)" d="M0 1.14H0.74" fill="none" stroke="#82525c" stroke-width="1.05" vector-effect="non-scaling-stroke"></path><path transform="translate(1230.86 690.40) scale(10.466 11.200)" d="M0 0V1H0.32Q0.75 1 0.75 0.5Q0.75 0 0.32 0Z" fill="none" stroke="#82525c" stroke-width="1.05" vector-effect="non-scaling-stroke"></path><path transform="translate(1241.02 690.40) scale(10.466 11.200)" d="M0.68 0H0V1H0.68M0 0.48H0.55" fill="none" stroke="#82525c" stroke-width="1.05" vector-effect="non-scaling-stroke"></path><path transform="translate(1250.44 690.40) scale(10.466 11.200)" d="M0.66 0H0V1M0 0.48H0.55" fill="none" stroke="#82525c" stroke-width="1.05" vector-effect="non-scaling-stroke"></path><path transform="translate(1259.65 690.40) scale(10.466 11.200)" d="M0 1.14H0.74" fill="none" stroke="#82525c" stroke-width="1.05" vector-effect="non-scaling-stroke"></path><path transform="translate(1269.69 690.40) scale(10.466 11.200)" d="M0.78 0.2Q0.65 0 0.4 0Q0 0 0 0.5Q0 1 0.4 1Q0.65 1 0.78 0.8" fill="none" stroke="#82525c" stroke-width="1.05" vector-effect="non-scaling-stroke"></path><path transform="translate(1280.16 690.40) scale(10.466 11.200)" d="M0.7 0.15Q0.58 0 0.36 0Q0.02 0 0.02 0.26Q0.02 0.47 0.36 0.5Q0.72 0.53 0.72 0.75Q0.72 1 0.36 1Q0.1 1 0 0.82" fill="none" stroke="#82525c" stroke-width="1.05" vector-effect="non-scaling-stroke"></path><path transform="translate(1290.00 690.40) scale(10.466 11.200)" d="M0 0L0.39 0.5L0.78 0M0.39 0.5V1" fill="none" stroke="#82525c" stroke-width="1.05" vector-effect="non-scaling-stroke"></path><path transform="translate(1300.46 690.40) scale(10.466 11.200)" d="M0.7 0.15Q0.58 0 0.36 0Q0.02 0 0.02 0.26Q0.02 0.47 0.36 0.5Q0.72 0.53 0.72 0.75Q0.72 1 0.36 1Q0.1 1 0 0.82" fill="none" stroke="#82525c" stroke-width="1.05" vector-effect="non-scaling-stroke"></path><path transform="translate(941.40 796.00) scale(11.151 11.200)" d="M0 0H0.78M0.39 0V1" fill="none" stroke="#82525c" stroke-width="1.05" vector-effect="non-scaling-stroke"></path><path transform="translate(952.55 796.00) scale(11.151 11.200)" d="M0.42 0Q0 0 0 0.5Q0 1 0.42 1Q0.84 1 0.84 0.5Q0.84 0 0.42 0Z" fill="none" stroke="#82525c" stroke-width="1.05" vector-effect="non-scaling-stroke"></path><path transform="translate(964.37 796.00) scale(11.151 11.200)" d="M0 1V0H0.45Q0.72 0 0.72 0.27Q0.72 0.54 0.45 0.54H0" fill="none" stroke="#82525c" stroke-width="1.05" vector-effect="non-scaling-stroke"></path><path transform="translate(1150.40 839.60) scale(11.616 11.200)" d="M0 1V0H0.45Q0.72 0 0.72 0.27Q0.72 0.54 0.45 0.54H0M0.42 0.54L0.74 1" fill="none" stroke="#82525c" stroke-width="1.05" vector-effect="non-scaling-stroke"></path><path transform="translate(1161.55 839.60) scale(11.616 11.200)" d="M0 0V1" fill="none" stroke="#82525c" stroke-width="1.05" vector-effect="non-scaling-stroke"></path><path transform="translate(1164.11 839.60) scale(11.616 11.200)" d="M0.8 0.2Q0.66 0 0.42 0Q0 0 0 0.5Q0 1 0.42 1Q0.82 1 0.82 0.55H0.45" fill="none" stroke="#82525c" stroke-width="1.05" vector-effect="non-scaling-stroke"></path><path transform="translate(1176.19 839.60) scale(11.616 11.200)" d="M0 0V1M0.74 0V1M0 0.5H0.74" fill="none" stroke="#82525c" stroke-width="1.05" vector-effect="non-scaling-stroke"></path><path transform="translate(1187.34 839.60) scale(11.616 11.200)" d="M0 0H0.78M0.39 0V1" fill="none" stroke="#82525c" stroke-width="1.05" vector-effect="non-scaling-stroke"></path><path transform="translate(1122.90 891.60) scale(11.455 11.200)" d="M0 1V0H0.45Q0.72 0 0.72 0.27Q0.72 0.54 0.45 0.54H0M0.42 0.54L0.74 1" fill="none" stroke="#82525c" stroke-width="1.05" vector-effect="non-scaling-stroke"></path><path transform="translate(1133.90 891.60) scale(11.455 11.200)" d="M0 0V1" fill="none" stroke="#82525c" stroke-width="1.05" vector-effect="non-scaling-stroke"></path><path transform="translate(1136.42 891.60) scale(11.455 11.200)" d="M0.8 0.2Q0.66 0 0.42 0Q0 0 0 0.5Q0 1 0.42 1Q0.82 1 0.82 0.55H0.45" fill="none" stroke="#82525c" stroke-width="1.05" vector-effect="non-scaling-stroke"></path><path transform="translate(1148.33 891.60) scale(11.455 11.200)" d="M0 0V1M0.74 0V1M0 0.5H0.74" fill="none" stroke="#82525c" stroke-width="1.05" vector-effect="non-scaling-stroke"></path><path transform="translate(1159.33 891.60) scale(11.455 11.200)" d="M0 0H0.78M0.39 0V1" fill="none" stroke="#82525c" stroke-width="1.05" vector-effect="non-scaling-stroke"></path><path transform="translate(1170.78 891.60) scale(11.455 11.200)" d="M0 1.14H0.74" fill="none" stroke="#82525c" stroke-width="1.05" vector-effect="non-scaling-stroke"></path><path transform="translate(1181.78 891.60) scale(11.455 11.200)" d="M0 0.22L0.36 0V1" fill="none" stroke="#82525c" stroke-width="1.05" vector-effect="non-scaling-stroke"></path><path transform="translate(1129.40 907.60) scale(11.181 11.200)" d="M0 1L0.4 0L0.8 1M0.14 0.65H0.66" fill="none" stroke="#82525c" stroke-width="1.05" vector-effect="non-scaling-stroke"></path><path transform="translate(1140.80 907.60) scale(11.181 11.200)" d="M0.7 0.15Q0.58 0 0.36 0Q0.02 0 0.02 0.26Q0.02 0.47 0.36 0.5Q0.72 0.53 0.72 0.75Q0.72 1 0.36 1Q0.1 1 0 0.82" fill="none" stroke="#82525c" stroke-width="1.05" vector-effect="non-scaling-stroke"></path><path transform="translate(1151.31 907.60) scale(11.181 11.200)" d="M0 1V0L0.43 1L0.86 0V1" fill="none" stroke="#82525c" stroke-width="1.05" vector-effect="non-scaling-stroke"></path><path transform="translate(1163.39 907.60) scale(11.181 11.200)" d="M0 1.14H0.74" fill="none" stroke="#82525c" stroke-width="1.05" vector-effect="non-scaling-stroke"></path><path transform="translate(1174.12 907.60) scale(11.181 11.200)" d="M0 1V0H0.45Q0.72 0 0.72 0.27Q0.72 0.54 0.45 0.54H0M0.42 0.54L0.74 1" fill="none" stroke="#82525c" stroke-width="1.05" vector-effect="non-scaling-stroke"></path><path transform="translate(1184.86 907.60) scale(11.181 11.200)" d="M0 0V1" fill="none" stroke="#82525c" stroke-width="1.05" vector-effect="non-scaling-stroke"></path><path transform="translate(1187.32 907.60) scale(11.181 11.200)" d="M0.8 0.2Q0.66 0 0.42 0Q0 0 0 0.5Q0 1 0.42 1Q0.82 1 0.82 0.55H0.45" fill="none" stroke="#82525c" stroke-width="1.05" vector-effect="non-scaling-stroke"></path><path transform="translate(1198.95 907.60) scale(11.181 11.200)" d="M0 0V1M0.74 0V1M0 0.5H0.74" fill="none" stroke="#82525c" stroke-width="1.05" vector-effect="non-scaling-stroke"></path><path transform="translate(1209.68 907.60) scale(11.181 11.200)" d="M0 0H0.78M0.39 0V1" fill="none" stroke="#82525c" stroke-width="1.05" vector-effect="non-scaling-stroke"></path><path transform="translate(1417.30 796.00) scale(11.151 11.200)" d="M0 0H0.78M0.39 0V1" fill="none" stroke="#82525c" stroke-width="1.05" vector-effect="non-scaling-stroke"></path><path transform="translate(1428.45 796.00) scale(11.151 11.200)" d="M0.42 0Q0 0 0 0.5Q0 1 0.42 1Q0.84 1 0.84 0.5Q0.84 0 0.42 0Z" fill="none" stroke="#82525c" stroke-width="1.05" vector-effect="non-scaling-stroke"></path><path transform="translate(1440.27 796.00) scale(11.151 11.200)" d="M0 1V0H0.45Q0.72 0 0.72 0.27Q0.72 0.54 0.45 0.54H0" fill="none" stroke="#82525c" stroke-width="1.05" vector-effect="non-scaling-stroke"></path><line x1="1187" y1="688" x2="1176" y2="664" stroke="#3ad04a" stroke-width="1.2"></line><polygon points="1173,660 1179,669 1174,670" fill="#3ad04a"></polygon><line x1="1187" y1="688" x2="1212" y2="688" stroke="#e8403a" stroke-width="1.6"></line><polygon points="1215,688 1206,685 1206,691" fill="#e8403a"></polygon><line x1="1187" y1="688" x2="1180" y2="714" stroke="#30c0e0" stroke-width="1.4"></line><polygon points="1179,718 1177,709 1183,710" fill="#30c0e0"></polygon><path transform="translate(1163.00 650.60) scale(12.821 11.000)" d="M0 0L0.39 0.5L0.78 0M0.39 0.5V1" fill="none" stroke="#3ad04a" stroke-width="1.05" vector-effect="non-scaling-stroke"></path><path transform="translate(1221.70 673.30) scale(16.667 11.000)" d="M0 0L0.78 1M0.78 0L0 1" fill="none" stroke="#e8403a" stroke-width="1.05" vector-effect="non-scaling-stroke"></path><path transform="translate(1165.00 718.60) scale(14.865 11.000)" d="M0 0H0.74L0 1H0.74" fill="none" stroke="#30c0e0" stroke-width="1.05" vector-effect="non-scaling-stroke"></path></svg>
<div style="position:absolute;left:895px;top:169px;width:500px;height:32px;background:#f6f8f8;border:1px solid #a9b1b4;box-sizing:border-box"></div>
<div style="position:absolute;left:1108px;top:174px;width:23px;height:23px;background:#d8dcde;border:1px solid #b0b6b8;box-sizing:border-box"></div>
<svg style="position:absolute;left:902px;top:176px;" width="18" height="18" viewBox="0 0 18 18"><path d="M0.5 5.5Q8 -2 15.5 5.5Q8 13 0.5 5.5Z" fill="#333"></path><circle cx="8" cy="5.5" r="2.6" fill="#fff"></circle><circle cx="8" cy="5.5" r="1.3" fill="#333"></circle><rect x="7" y="11" width="9" height="6" rx="1" fill="#333"></rect><circle cx="11.5" cy="14" r="1.6" fill="#ddd"></circle></svg>
<svg style="position:absolute;left:928px;top:176px;" width="18" height="18" viewBox="0 0 18 18"><path d="M0.5 5.5Q8 -2 15.5 5.5Q8 13 0.5 5.5Z" fill="#9a9a9a"></path><circle cx="8" cy="5.5" r="2.6" fill="#ddd"></circle><circle cx="8" cy="5.5" r="1.2" fill="#999"></circle><circle cx="12" cy="12.5" r="4.2" fill="#f4f4f4" stroke="#b0b0b0"></circle><path d="M12 10V12.5H14" stroke="#aaa" fill="none"></path></svg>
<svg style="position:absolute;left:954px;top:176px;" width="18" height="18" viewBox="0 0 18 18"><rect x="0.5" y="1.5" width="15" height="14" fill="#f4f4f4" stroke="#999"></rect><circle cx="7" cy="8" r="4.5" fill="#fff" stroke="#2a8fc4" stroke-width="1.3"></circle><path d="M10 11L15 16" stroke="#888" stroke-width="2.2"></path></svg>
<svg style="position:absolute;left:980px;top:176px;" width="18" height="18" viewBox="0 0 18 18"><circle cx="7" cy="7" r="6" fill="#fff" stroke="#2a8fc4" stroke-width="1.5"></circle><path d="M4 7H10M7 4V10" stroke="#1e6a98" stroke-width="2"></path><path d="M11.5 11.5L16 16" stroke="#888" stroke-width="2.5"></path></svg>
<svg style="position:absolute;left:1006px;top:176px;" width="18" height="18" viewBox="0 0 18 18"><circle cx="7" cy="7" r="6" fill="#fff" stroke="#2a8fc4" stroke-width="1.5"></circle><path d="M4 7H10" stroke="#1e6a98" stroke-width="2"></path><path d="M11.5 11.5L16 16" stroke="#888" stroke-width="2.5"></path></svg>
<svg style="position:absolute;left:1032px;top:176px;" width="18" height="18" viewBox="0 0 18 18"><defs><linearGradient id="rf" x1="0" y1="0" x2="1" y2="1"><stop offset="0" stop-color="#ffffff"></stop><stop offset="1" stop-color="#5ab0d8"></stop></linearGradient></defs><rect x="0.5" y="1.5" width="15" height="14" fill="url(#rf)" stroke="#9aa"></rect><path d="M2 14L14 3" stroke="#1a5a80" stroke-width="1.4"></path></svg>
<svg style="position:absolute;left:1058px;top:176px;" width="18" height="18" viewBox="0 0 18 18"><defs><radialGradient id="sp2" cx="0.35" cy="0.35" r="0.7"><stop offset="0" stop-color="#ffffff"></stop><stop offset="1" stop-color="#8a8a8a"></stop></radialGradient></defs><path d="M7 4L10 1H16V9L13 12H7Z" fill="#dcdcdc"></path><path d="M13 4L16 1V9L13 12Z" fill="#aaa"></path><circle cx="6" cy="11" r="5" fill="url(#sp2)"></circle><path d="M17 14V17H14Z" fill="#444"></path></svg>
<svg style="position:absolute;left:1084px;top:176px;" width="18" height="18" viewBox="0 0 18 18"><path d="M1 5L5 1H16V12L12 16H1Z" fill="#fff" stroke="#1e6a90" stroke-width="1.4"></path><path d="M5 1H16L12 5H1Z" fill="#c6ecfa" stroke="#1e6a90" stroke-width="1.2"></path><path d="M12 5L16 1V12L12 16Z" fill="#6ab8dc" stroke="#1e6a90" stroke-width="1.2"></path><path d="M17 14V17H14Z" fill="#444"></path></svg>
<svg style="position:absolute;left:1111px;top:176px;" width="18" height="18" viewBox="0 0 18 18"><path d="M1 2H6Q13 2 13 11" fill="none" stroke="#333" stroke-width="1.2"></path><path d="M5 7L9 2M9 11L13 6" stroke="#2a9ad0" stroke-width="1.1"></path><path d="M6 14Q11 10 16 14Q11 18 6 14Z" fill="#333"></path><circle cx="11" cy="14" r="1.6" fill="#fff"></circle></svg>
<svg style="position:absolute;left:1137px;top:176px;" width="18" height="18" viewBox="0 0 18 18"><path d="M1 5L5 1H12L16 5V12L9 16L1 12Z" fill="#cdeefa" stroke="#2a8fc4"></path><path d="M7 2L11 1L12 6H6Z" fill="#4aa6d6"></path><rect x="10" y="10" width="6" height="7" fill="#fff" stroke="#555"></rect><path d="M17 14V17H14Z" fill="#444"></path></svg>
<svg style="position:absolute;left:1163px;top:176px;" width="18" height="18" viewBox="0 0 18 18"><rect x="0.5" y="0.5" width="12" height="14" fill="#fff" stroke="#999"></rect><path d="M0.5 4H12.5M0.5 7.5H12.5M0.5 11H12.5M5 0.5V14.5" stroke="#bbb"></path><rect x="7" y="9" width="10" height="8" rx="1.5" fill="#333"></rect><circle cx="12" cy="13" r="2.2" fill="#999" stroke="#eee" stroke-width=".6"></circle></svg>
<svg style="position:absolute;left:1188px;top:176px;" width="18" height="18" viewBox="0 0 18 18"><path d="M1 5L6 1H17L13 5Z" fill="#dff2fa" stroke="#6aa0be"></path><path d="M1 5H13L11 16H4Z" fill="#bfe4f4" stroke="#6aa0be"></path><path d="M13 5L17 1L16 12L11 16Z" fill="#8fcbe6" stroke="#6aa0be"></path></svg>
<svg style="position:absolute;left:1215px;top:176px;" width="18" height="18" viewBox="0 0 18 18"><rect x="0.5" y="0.5" width="15" height="15" fill="none" stroke="#aaa" stroke-dasharray="1 1"></rect><path d="M0.5 15.5V0.5H15.5Z" fill="#cdeefa" opacity=".6"></path><path d="M1 15L16 0" stroke="#1e6a90" stroke-width="1.5"></path><path d="M17 14V17H14Z" fill="#444"></path></svg>
<svg style="position:absolute;left:1240px;top:176px;" width="18" height="18" viewBox="0 0 18 18"><path d="M1 1L4 4M4 1L1 4M10 1L13 4M13 1L10 4" stroke="#8a6020" stroke-width="1.2"></path><path d="M6 16L12 2" stroke="#8a6020" stroke-dasharray="2 1.5" stroke-width="1.3"></path><path d="M7 8V14H15" stroke="#8a6020" fill="none"></path><path d="M17 14V17H14Z" fill="#444"></path></svg>
<svg style="position:absolute;left:1266px;top:176px;" width="18" height="18" viewBox="0 0 18 18"><rect x="0.5" y="0.5" width="11" height="8" fill="#fbe8c0" stroke="#999"></rect><path d="M12 4H15V10" stroke="#333" fill="none"></path><path d="M13 9L15 12L17 9Z" fill="#333"></path><path d="M6 14Q11 10 16 14Q11 18 6 14Z" fill="#333"></path><circle cx="11" cy="14" r="1.6" fill="#fff"></circle></svg>
<svg style="position:absolute;left:1292px;top:176px;" width="18" height="18" viewBox="0 0 18 18"><path d="M4 3L8 9L15 7M8 9L4 15" stroke="#555" stroke-width="1.2" fill="none"></path><circle cx="4" cy="3" r="2.5" fill="#4aae3a"></circle><circle cx="15" cy="7" r="2.5" fill="#e8403a"></circle><circle cx="4" cy="15" r="2.5" fill="#2a8fc4"></circle></svg>
<svg style="position:absolute;left:1319px;top:176px;" width="18" height="18" viewBox="0 0 18 18"><path d="M8 1L16 15H1Z" fill="none" stroke="#bbb" stroke-width="2"></path><path d="M8 6L12 13H4Z" fill="#ddd"></path><path d="M11 10L17 14L11 17Z" fill="#ddd"></path></svg>
<svg style="position:absolute;left:1344px;top:176px;" width="18" height="18" viewBox="0 0 18 18"><rect x="3" y="2" width="3.5" height="13" fill="#999"></rect><rect x="10" y="2" width="3.5" height="13" fill="#999"></rect></svg>
<svg style="position:absolute;left:1371px;top:176px;" width="18" height="18" viewBox="0 0 18 18"><path d="M1 4H12Q16 4 16 9Q16 14 12 14H1Z" fill="#e8e8e8"></path><path d="M5 4H12Q16 4 16 9Q16 14 12 14H5Z" fill="#d0d0d0"></path></svg>
<div style="position:absolute;left:616px;top:225px;width:681px;height:679px;background:rgba(222,222,210,0.085);border-radius:3px;box-shadow:0 14px 40px 4px rgba(0,0,0,0.03)"></div>
<div style="position:absolute;left:616px;top:225px;width:681px;height:31px;background:rgba(0,0,0,0.01)"></div>
<div style="position:absolute;left:616px;top:255px;width:681px;height:1px;background:rgba(0,0,0,0.015)"></div>
<div style="position:absolute;left:674px;top:266px;width:490px;height:21px;border:1px solid rgba(0,0,0,0.028);box-sizing:border-box"></div>
<div style="position:absolute;left:1195px;top:266px;width:98px;height:21px;border:1px solid rgba(0,0,0,0.028);box-sizing:border-box"></div>
<div style="position:absolute;left:1167px;top:266px;width:26px;height:21px;border:1px solid rgba(0,0,0,0.028);box-sizing:border-box"></div>
<svg style="position:absolute;left:626px;top:271px;" width="12" height="10" viewBox="0 0 12 10"><path d="M0 5L5 0V3H12V7H5V10Z" fill="rgba(0,0,0,0.09)"></path></svg>
<svg style="position:absolute;left:644px;top:271px;" width="12" height="10" viewBox="0 0 12 10"><path d="M12 5L7 0V3H0V7H7V10Z" fill="rgba(0,0,0,0.05)"></path></svg>
<svg style="position:absolute;left:663px;top:274px;" width="8" height="5" viewBox="0 0 8 5"><path d="M0 0H8L4 5Z" fill="rgba(0,0,0,0.07)"></path></svg>
<svg style="position:absolute;left:1283px;top:229px;" width="9" height="9" viewBox="0 0 9 9"><path d="M0 0L9 9M9 0L0 9" stroke="rgba(0,0,0,0.07)" stroke-width="1.2"></path></svg>
<svg style="position:absolute;left:629px;top:298px;" width="14" height="14" viewBox="0 0 14 14"><rect x="1" y="4" width="9" height="9" fill="none" stroke="rgba(0,0,0,0.07)"></rect><path d="M8 1V8M11 2V8" stroke="rgba(0,0,0,0.07)"></path></svg>
<svg style="position:absolute;left:711px;top:298px;" width="14" height="14" viewBox="0 0 14 14"><g fill="rgba(40,120,200,0.09)"><rect x="0" y="0" width="3" height="3"></rect><rect x="5" y="0" width="3" height="3"></rect><rect x="10" y="0" width="3" height="3"></rect><rect x="0" y="5" width="3" height="3"></rect><rect x="5" y="5" width="3" height="3"></rect><rect x="10" y="5" width="3" height="3"></rect><rect x="0" y="10" width="3" height="3"></rect><rect x="5" y="10" width="3" height="3"></rect><rect x="10" y="10" width="3" height="3"></rect></g></svg>
<svg style="position:absolute;left:775px;top:296px;" width="14" height="17" viewBox="0 0 14 17"><path d="M2 1H12M7 1V16M3 4V12M11 4V12" stroke="rgba(0,0,0,0.07)" stroke-width="1.5"></path></svg>
<svg style="position:absolute;left:697px;top:303px;" width="7" height="4" viewBox="0 0 7 4"><path d="M0 0L3.5 3.5L7 0" stroke="rgba(0,0,0,0.08)" fill="none"></path></svg>
<svg style="position:absolute;left:760px;top:303px;" width="7" height="4" viewBox="0 0 7 4"><path d="M0 0L3.5 3.5L7 0" stroke="rgba(0,0,0,0.08)" fill="none"></path></svg>
<svg style="position:absolute;left:822px;top:303px;" width="7" height="4" viewBox="0 0 7 4"><path d="M0 0L3.5 3.5L7 0" stroke="rgba(0,0,0,0.08)" fill="none"></path></svg>
<svg style="position:absolute;left:1279px;top:296px;" width="14" height="14" viewBox="0 0 14 14"><text x="0" y="12" font-size="13" fill="rgba(0,0,0,0.07)" font-family="Liberation Sans">?</text></svg>
<svg style="position:absolute;left:630px;top:327px;" width="8" height="6" viewBox="0 0 8 6"><path d="M0 0H8L4 6Z" fill="rgba(0,0,0,0.08)"></path></svg>
<svg style="position:absolute;left:630px;top:490px;" width="5" height="8" viewBox="0 0 5 8"><path d="M0 0L5 4L0 8Z" fill="rgba(0,0,0,0.06)"></path></svg>
<svg style="position:absolute;left:630px;top:514px;" width="5" height="8" viewBox="0 0 5 8"><path d="M0 0L5 4L0 8Z" fill="rgba(0,0,0,0.06)"></path></svg>
<div style="position:absolute;left:774px;top:318px;width:1px;height:470px;background:rgba(0,0,0,0.03)"></div>
<div style="position:absolute;left:700px;top:799px;width:591px;height:22px;border:1px solid rgba(0,0,0,0.028);box-sizing:border-box"></div>
<div style="position:absolute;left:700px;top:825px;width:591px;height:20px;border:1px solid rgba(0,0,0,0.028);box-sizing:border-box"></div>
<div style="position:absolute;left:760px;top:868px;width:70px;height:21px;background:rgba(80,160,230,0.05);border:1px solid rgba(0,0,0,0.028);box-sizing:border-box"></div>
<div style="position:absolute;left:1089px;top:868px;width:65px;height:21px;border:1px solid rgba(0,0,0,0.028);box-sizing:border-box"></div>
<div class="t" style="left: 928px; top: 236.84px; font-size: 12px; color: rgba(0, 0, 0, 0.086); transform: scaleX(0.8872);">Save Object</div>
<div class="t" style="left: 711px; top: 269.84px; font-size: 12px; color: rgba(0, 0, 0, 0.086); transform: scaleX(0.9188);">jaurila0l</div>
<div class="t" style="left: 767.6px; top: 269.84px; font-size: 12px; color: rgba(0, 0, 0, 0.086); transform: scaleX(0.8841);">System (C:)</div>
<div class="t" style="left: 842.8px; top: 269.84px; font-size: 12px; color: rgba(0, 0, 0, 0.086); transform: scaleX(0.7958);">PTCU</div>
<div class="t" style="left: 888px; top: 269.84px; font-size: 12px; color: rgba(0, 0, 0, 0.086); transform: scaleX(0.8997);">TrainCentral</div>
<svg style="position:absolute;left:700px;top:274px;" width="4" height="7" viewBox="0 0 4 7"><path d="M0 0L4 3.5L0 7Z" fill="rgba(0,0,0,0.08)"></path></svg>
<svg style="position:absolute;left:758px;top:274px;" width="4" height="7" viewBox="0 0 4 7"><path d="M0 0L4 3.5L0 7Z" fill="rgba(0,0,0,0.08)"></path></svg>
<svg style="position:absolute;left:832px;top:274px;" width="4" height="7" viewBox="0 0 4 7"><path d="M0 0L4 3.5L0 7Z" fill="rgba(0,0,0,0.08)"></path></svg>
<svg style="position:absolute;left:875px;top:274px;" width="4" height="7" viewBox="0 0 4 7"><path d="M0 0L4 3.5L0 7Z" fill="rgba(0,0,0,0.08)"></path></svg>
<svg style="position:absolute;left:955px;top:274px;" width="4" height="7" viewBox="0 0 4 7"><path d="M0 0L4 3.5L0 7Z" fill="rgba(0,0,0,0.08)"></path></svg>
<svg style="position:absolute;left:684px;top:272px;" width="14" height="11" viewBox="0 0 14 11"><rect x="0" y="0" width="14" height="11" fill="rgba(230,170,40,0.12)"></rect></svg>
<div class="t" style="left: 1200px; top: 269.84px; font-size: 12px; color: rgba(0, 0, 0, 0.086); transform: scaleX(0.8953);">Search...</div>
<div class="t" style="left: 644.4px; top: 295.84px; font-size: 12px; color: rgba(0, 0, 0, 0.086); transform: scaleX(0.9445);">Organize</div>
<div class="t" style="left: 726px; top: 295.84px; font-size: 12px; color: rgba(0, 0, 0, 0.086); transform: scaleX(0.9278);">Views</div>
<div class="t" style="left: 792.6px; top: 295.84px; font-size: 12px; color: rgba(0, 0, 0, 0.086); transform: scaleX(0.9281);">Tools</div>
<div class="t" style="left: 644px; top: 324.64px; font-size: 12px; color: rgba(0, 0, 0, 0.086); font-weight: bold; transform: scaleX(0.8979);">Common Folders</div>
<div class="t" style="left: 663.7px; top: 346.84px; font-size: 12px; color: rgba(0, 0, 0, 0.086); transform: scaleX(0.9084);">Desktop</div>
<div style="position:absolute;left:644px;top:346px;width:15px;height:12px;background:rgba(60,150,220,0.08)"></div>
<div class="t" style="left: 663.7px; top: 369.84px; font-size: 12px; color: rgba(0, 0, 0, 0.086); transform: scaleX(0.9121);">My Documents</div>
<div style="position:absolute;left:644px;top:369px;width:15px;height:12px;background:rgba(60,150,220,0.08)"></div>
<div class="t" style="left: 663.7px; top: 392.84px; font-size: 12px; color: rgba(0, 0, 0, 0.086); transform: scaleX(0.9188);">jaurila0l</div>
<div style="position:absolute;left:644px;top:392px;width:15px;height:12px;background:rgba(60,150,220,0.08)"></div>
<div class="t" style="left: 663.7px; top: 415.84px; font-size: 12px; color: rgba(0, 0, 0, 0.086); transform: scaleX(0.9565);">Working Directory</div>
<div style="position:absolute;left:644px;top:415px;width:15px;height:12px;background:rgba(60,150,220,0.08)"></div>
<div class="t" style="left: 663.7px; top: 438.84px; font-size: 12px; color: rgba(0, 0, 0, 0.086); transform: scaleX(0.894);">Recent</div>
<div style="position:absolute;left:644px;top:438px;width:15px;height:12px;background:rgba(60,150,220,0.08)"></div>
<div class="t" style="left: 663.7px; top: 461.84px; font-size: 12px; color: rgba(0, 0, 0, 0.086); transform: scaleX(0.9117);">Favorites</div>
<div style="position:absolute;left:644px;top:461px;width:15px;height:12px;background:rgba(60,150,220,0.08)"></div>
<div class="t" style="left: 644px; top: 486.84px; font-size: 12px; color: rgba(0, 0, 0, 0.086); font-weight: bold; transform: scaleX(1.0139);">Network</div>
<div class="t" style="left: 644px; top: 511.74px; font-size: 12px; color: rgba(0, 0, 0, 0.086); font-weight: bold; transform: scaleX(0.9739);">Folder Tree</div>
<div class="t" style="left: 801px; top: 322.84px; font-size: 12px; color: rgba(0, 0, 0, 0.086); transform: scaleX(0.8972);">.</div>
<div style="position:absolute;left:781.5px;top:323px;width:15px;height:11px;background:rgba(230,170,40,0.07)"></div>
<div class="t" style="left: 801px; top: 341.84px; font-size: 12px; color: rgba(0, 0, 0, 0.086); transform: scaleX(0.8625);">CRAS_MECH</div>
<div style="position:absolute;left:781.5px;top:342px;width:15px;height:11px;background:rgba(230,170,40,0.07)"></div>
<div class="t" style="left: 801px; top: 360.84px; font-size: 12px; color: rgba(0, 0, 0, 0.086); transform: scaleX(0.9243);">CRCB-SCEM Creo_Introduction to Creo Schematics for Cabling</div>
<div style="position:absolute;left:781.5px;top:361px;width:15px;height:11px;background:rgba(230,170,40,0.07)"></div>
<div class="t" style="left: 801px; top: 379.84px; font-size: 12px; color: rgba(0, 0, 0, 0.086); transform: scaleX(0.8777);">CRSM-CCSM_LabFiles (1)</div>
<div style="position:absolute;left:781.5px;top:380px;width:15px;height:11px;background:rgba(230,170,40,0.07)"></div>
<div class="t" style="left: 801px; top: 398.84px; font-size: 12px; color: rgba(0, 0, 0, 0.086); transform: scaleX(0.9867);">gbh_cotm</div>
<div style="position:absolute;left:781.5px;top:399px;width:15px;height:11px;background:rgba(230,170,40,0.07)"></div>
<div class="t" style="left: 801px; top: 417.84px; font-size: 12px; color: rgba(0, 0, 0, 0.086); transform: scaleX(0.8911);">OLD</div>
<div style="position:absolute;left:781.5px;top:418px;width:15px;height:11px;background:rgba(230,170,40,0.07)"></div>
<div class="t" style="left: 801px; top: 436.84px; font-size: 12px; color: rgba(0, 0, 0, 0.086); transform: scaleX(0.8741);">senai_ds</div>
<div style="position:absolute;left:781.5px;top:437px;width:15px;height:11px;background:rgba(230,170,40,0.07)"></div>
<div class="t" style="left: 801px; top: 455.84px; font-size: 12px; color: rgba(0, 0, 0, 0.086); transform: scaleX(1.0068);">SheetmetalTutorials</div>
<div style="position:absolute;left:781.5px;top:456px;width:15px;height:11px;background:rgba(230,170,40,0.07)"></div>
<div class="t" style="left: 627.5px; top: 803.84px; font-size: 12px; color: rgba(0, 0, 0, 0.086); transform: scaleX(0.9205);">File name</div>
<div class="t" style="left: 705px; top: 803.84px; font-size: 12px; color: rgba(0, 0, 0, 0.086); transform: scaleX(0.9608);">ASSEMBLY.ASM</div>
<div class="t" style="left: 627.5px; top: 827.84px; font-size: 12px; color: rgba(0, 0, 0, 0.086); transform: scaleX(0.8805);">Save To</div>
<div class="t" style="left: 786px; top: 872.84px; font-size: 12px; color: rgba(0, 0, 0, 0.086); transform: scaleX(0.8649);">OK</div>
<div class="t" style="left: 1103px; top: 872.84px; font-size: 12px; color: rgba(0, 0, 0, 0.086); transform: scaleX(0.9636);">Cancel</div>
<svg style="position:absolute;left:784px;top:893px;" width="14" height="20" viewBox="0 0 14 20"><path d="M1 1V16L5 12.5L8 19L10.5 18L7.5 11.5H12.5Z" fill="#fff" stroke="#222" stroke-width="1.1" stroke-linejoin="round"></path></svg>
<div style="position:absolute;left:6px;top:1052px;width:22px;height:18px;background:#dde1e2;border:1px solid #aab0b2;box-sizing:border-box"></div>
<svg style="position:absolute;left:9px;top:1054px;" width="17" height="15" viewBox="0 0 17 15"><rect x="0.5" y="0.5" width="15" height="13" fill="#fff" stroke="#777"></rect><path d="M0.5 3.5H15.5M4 3.5V13.5" stroke="#777"></path><ellipse cx="11" cy="11" rx="4.5" ry="2.5" fill="#fff" stroke="#333"></ellipse><circle cx="11" cy="11" r="1.3" fill="#333"></circle></svg>
<svg style="position:absolute;left:35px;top:1053px;" width="16" height="16" viewBox="0 0 16 16"><circle cx="8" cy="8" r="6" fill="#4aa6e0"></circle><path d="M3 6Q8 9 13 6M4 11Q8 8 12 11" stroke="#fff" stroke-width="1" fill="none"></path><ellipse cx="8" cy="8" rx="8" ry="3.5" transform="rotate(-35 8 8)" fill="none" stroke="#555" stroke-width="1.2"></ellipse></svg>
<svg style="position:absolute;left:61px;top:1053px;" width="16" height="16" viewBox="0 0 16 16"><rect x="0.5" y="0.5" width="15" height="15" rx="1" fill="#eef4f8" stroke="#2a7ab0"></rect></svg>
<div style="position:absolute;left:89px;top:1052px;width:1px;height:18px;background:#c5cbce"></div>
<div style="position:absolute;left:1422px;top:1051px;width:25px;height:22px;background:#f2f4f4;border:1px solid #c8ccce;box-sizing:border-box"></div>
<svg style="position:absolute;left:1425px;top:1053px;" width="18" height="18" viewBox="0 0 18 18"><path d="M5.5 1H12.5L17 5.5V12.5L12.5 17H5.5L1 12.5V5.5Z" fill="#e03028" stroke="#a01810"></path><circle cx="9" cy="9" r="5" fill="#fff"></circle><path d="M6.5 6.5L11.5 11.5M11.5 6.5L6.5 11.5" stroke="#e03028" stroke-width="2"></path></svg>
<div style="position:absolute;left:1447px;top:1051px;width:4px;height:22px;background:#e6e8e8"></div>
<div style="position:absolute;left:1490px;top:1047px;width:1px;height:27px;background:#c5cbce"></div>
<div style="position:absolute;left:1495px;top:1047px;width:1px;height:27px;background:#c5cbce"></div>
<svg style="position:absolute;left:1502px;top:1053px;" width="17" height="16" viewBox="0 0 17 16"><path d="M1 6L3 1H7V14H1Z" fill="#333"></path><path d="M16 6L14 1H10V14H16Z" fill="#333"></path><rect x="6" y="4" width="5" height="5" fill="#555"></rect><path d="M2 9H6M11 9H15" stroke="#888"></path></svg>
<svg style="position:absolute;left:1525px;top:1059px;" width="7" height="4.8500000000000005" viewBox="0 0 7 4.8500000000000005"><path d="M0 0H7L3.5 3.8500000000000005Z" fill="#555"></path></svg>
<div style="position:absolute;left:1538px;top:1047px;width:1px;height:27px;background:#c5cbce"></div>
<svg style="position:absolute;left:1545px;top:1055px;" width="16" height="13" viewBox="0 0 16 13"><rect x="0.5" y="0.5" width="14" height="11" fill="none" stroke="#333" stroke-dasharray="2.5 1.5"></rect></svg>
<svg style="position:absolute;left:1568px;top:1059px;" width="7" height="4.8500000000000005" viewBox="0 0 7 4.8500000000000005"><path d="M0 0H7L3.5 3.8500000000000005Z" fill="#555"></path></svg>
<svg style="position:absolute;left:1585px;top:1053px;" width="17" height="17" viewBox="0 0 17 17"><rect x="0.5" y="1.5" width="14" height="13" fill="none" stroke="#aaa" stroke-dasharray="2 1.5"></rect><ellipse cx="6" cy="5" rx="4" ry="2.5" fill="#fff" stroke="#999"></ellipse><path d="M9 8L16 14L12 14L10 17Z" fill="#fff" stroke="#999"></path></svg>
<div style="position:absolute;left:1607px;top:1048px;width:40px;height:27px;background:#f4f6f6;border:1px solid #b5babc;box-sizing:border-box"></div>
<svg style="position:absolute;left:1617px;top:1052px;" width="20" height="19" viewBox="0 0 20 19"><path d="M1 6L6 1H19V13L14 18H1Z" fill="#fff" stroke="#222" stroke-width="1.3"></path><path d="M1 6H14V18M14 6L19 1" fill="none" stroke="#222" stroke-width="1.3"></path><rect x="4" y="8" width="8" height="8" fill="#f6dca4" stroke="#c9a050"></rect><rect x="6" y="6" width="7" height="7" fill="#6ab8e8" stroke="#2a8fc4"></rect></svg>
<div style="position:absolute;left:1737px;top:1050px;width:165px;height:23px;background:#f8f9f9;border:1px solid #b5babc;box-sizing:border-box"></div>
<div style="position:absolute;left:1886px;top:1051px;width:1px;height:21px;background:#b5babc"></div>
<svg style="position:absolute;left:1890px;top:1060px;" width="9" height="5" viewBox="0 0 9 5"><path d="M0 0H9L4.5 5Z" fill="#444"></path></svg>
<div class="t" style="left: 1745px; top: 1055.42px; font-size: 12.5px; color: rgb(51, 51, 51); transform: scaleX(0.9473);">Geometry</div>
</div></body></html>
